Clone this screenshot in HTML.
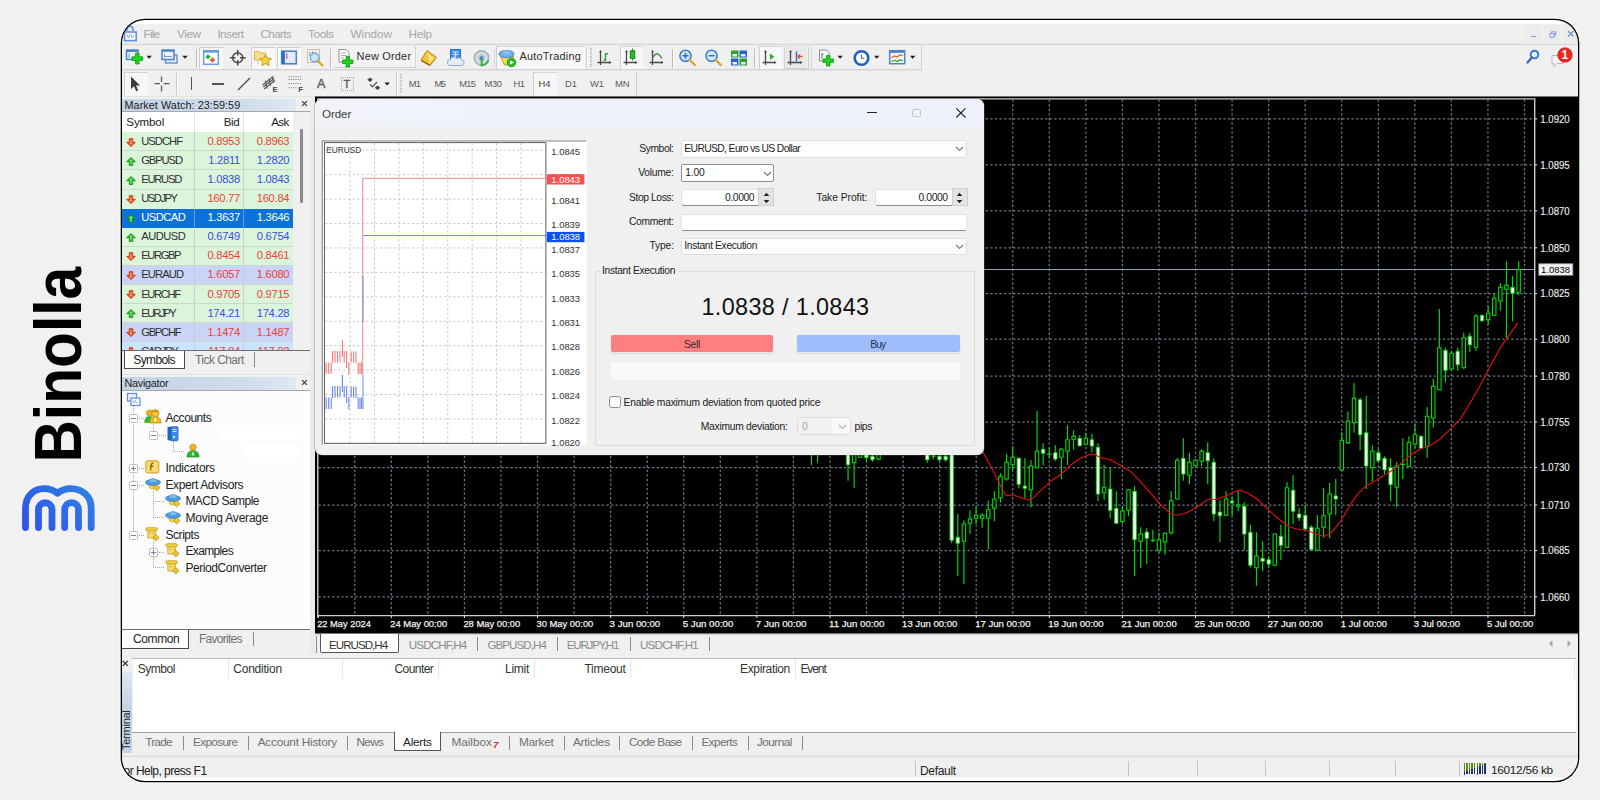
<!DOCTYPE html>
<html lang="en">
<head>
<meta charset="utf-8">
<title>Binolla - MetaTrader 4 Order</title>
<style>
*{box-sizing:border-box;margin:0;padding:0}
html,body{width:1600px;height:800px;overflow:hidden}
body{background:#f1f1f1;font-family:"Liberation Sans",sans-serif;font-size:12px;color:#222;position:relative}
.abs,.t,.b{position:absolute}
.t{white-space:nowrap;line-height:1;}
#win{position:absolute;left:122px;top:20px;width:1456px;height:760.5px;border-radius:23px;background:#f0f0f0;overflow:hidden}
#frame{position:absolute;left:122px;top:20px;width:1456px;height:760.5px;border-radius:23px;box-shadow:0 0 0 1.3px #000,0 0 0 2.4px #fbfbfb;pointer-events:none}
#in{position:absolute;left:-122px;top:-20px;width:1600px;height:800px}
.sep{position:absolute;width:1px;background:#b9b9b9}
.hl{position:absolute;height:1px}
.vl{position:absolute;width:1px}
.ptitle{position:absolute;height:14px;background:linear-gradient(90deg,#c3d3e6 0%,#cfdcec 70%,#dfe8f3 100%);}
.inp{position:absolute;background:#fff;border:1px solid #e3e3e3;border-bottom-color:#8d8d8d;border-radius:3px}
</style>
</head>
<body>
<!-- left brand -->
<div class="t" id="brand" style="left:0;top:0;transform-origin:0 0;transform:translate(23.6px,462.6px) rotate(-90deg) scale(0.872,1);font-weight:bold;font-size:67.4px;color:#000;line-height:67.4px">Binolla</div>
<svg class="abs" style="left:10px;top:470px" width="100" height="80" viewBox="0 0 100 80">
<defs><linearGradient id="lg" gradientUnits="userSpaceOnUse" x1="80" y1="14" x2="25" y2="62"><stop offset="0" stop-color="#2f82e6"/><stop offset="1" stop-color="#2f55e6"/></linearGradient></defs>
<g fill="none" stroke="url(#lg)" stroke-width="6.8" stroke-linecap="round" stroke-linejoin="round">
<path d="M15.5 57.5 V38 C15.5 26 24 18.6 34 18.6 C40 18.6 44.5 20.5 47.5 23.3 C50.5 20.5 55 18.6 61 18.6 C72 18.6 81.2 26 81.2 38 V57.5"/>
<path d="M28.5 57.5 V39.5 A6.75 6.75 0 0 1 42 39.5 V57.5"/>
<path d="M54.7 57.5 V39.5 A6.9 6.9 0 0 1 68.5 39.5 V57.5"/>
</g>
</svg>
<div id="win"><div id="in">
<!-- top white strip + menu -->
<div class="b" style="left:120px;top:19px;width:1460px;height:5px;background:#fff"></div>
<div class="b" style="left:120px;top:24px;width:1460px;height:21px;background:#f0f0f0"></div>
<div class="hl" style="left:120px;top:43px;width:1460px;background:#e8e8e8"></div><div class="hl" style="left:120px;top:44px;width:1460px;background:#d8d8d8"></div><div class="hl" style="left:120px;top:45px;width:1460px;background:#ececec"></div>
<!-- app icon -->
<svg class="abs" style="left:123px;top:25px" width="16" height="18" viewBox="0 0 16 18"><path d="M4 6 V3.5 Q4 1.5 7 1.5 Q10 1.5 10 3.5 V6" fill="#dfeaff" stroke="#5b8fe8" stroke-width="1.6"/><rect x="1.6" y="7" width="11.6" height="8.6" fill="#fff" stroke="#5b8fe8" stroke-width="1.6"/><path d="M4 9.5l1.5 3.5 1.5-3.5M8 9.5l1.5 3.5 1.2-2.5" stroke="#7aa4ec" stroke-width="1" fill="none"/></svg>
<!-- window controls -->
<div class="b" style="left:1525px;top:25px;width:17px;height:17px;background:#ececec"></div>
<div class="b" style="left:1544px;top:25px;width:17px;height:17px;background:#ececec"></div>
<div class="b" style="left:1563px;top:25px;width:17px;height:17px;background:#ececec"></div>
<div class="b" style="left:1531px;top:35.5px;width:5px;height:1.5px;background:#7f9ad6"></div>
<svg class="abs" style="left:1548.5px;top:30.5px" width="8" height="8" viewBox="0 0 9 9"><path d="M2.5 2.5V1h5v4h-1.5M1 3h5v4H1z" fill="none" stroke="#7d97cc" stroke-width="1.1"/></svg>
<svg class="abs" style="left:1567px;top:30px" width="8" height="8" viewBox="0 0 8 8"><path d="M1 1l5.5 5.5M6.5 1L1 6.5" fill="none" stroke="#7f9ad6" stroke-width="1.5"/></svg>
<!-- toolbar row 1 -->
<div class="hl" style="left:120px;top:69px;width:802px;background:#d3d3d3"></div><div class="hl" style="left:120px;top:70px;width:802px;background:#e4e4e4"></div>
<!-- ===== toolbar 1 icons ===== -->
<!-- new chart -->
<svg class="abs" style="left:125px;top:48px" width="30" height="18" viewBox="0 0 30 18">
<rect x="1.5" y="2" width="11.5" height="9.5" fill="#e8f0fb" stroke="#4d84c9" stroke-width="1.5"/><rect x="1.5" y="2" width="11.5" height="2" fill="#4d84c9"/>
<path d="M4 5.5v4.5" stroke="#7f9fd0" stroke-width="1"/>
<path d="M10.5 5.2h3.6v3.6h3.6v3.6h-3.6v3.6h-3.6v-3.6H6.9V8.800h3.6z" fill="#1fd11f" stroke="#0a9a0a" stroke-width="0.8"/>
<path d="M21.5 7.8h5.4l-2.7 3z" fill="#1a1a1a"/></svg>
<!-- profiles -->
<svg class="abs" style="left:160px;top:48px" width="32" height="18" viewBox="0 0 32 18">
<rect x="5.500" y="7" width="11.5" height="8" fill="#dfe9f8" stroke="#5b8dcc" stroke-width="1.3"/>
<rect x="2" y="2" width="12" height="9.500" fill="#eef3fb" stroke="#4d84c9" stroke-width="1.5"/><rect x="2" y="2" width="12" height="1.8" fill="#4d84c9"/>
<path d="M4.500 8.500h7.500M4.500 6v4" stroke="#7f9fd0" stroke-width="1"/>
<path d="M22.3 7.800h5.400l-2.700 3z" fill="#1a1a1a"/></svg>
<div class="sep" style="left:196px;top:49px;height:19px"></div><div class="sep" style="left:197px;top:49px;height:19px;background:#fdfdfd"></div>
<!-- market watch (pressed) -->
<div class="b" style="left:199px;top:47px;width:24px;height:22px;background:#f8f8f8;border-left:1px solid #cfcfcf;border-top:1px solid #cfcfcf"></div>
<svg class="abs" style="left:202px;top:49px" width="18" height="18" viewBox="0 0 18 18"><rect x="1.700" y="1.700" width="14.600" height="13.600" fill="#fff" stroke="#6a9de0" stroke-width="1.5"/><rect x="1.700" y="1.700" width="14.600" height="2" fill="#6a9de0"/>
<path d="M6 5.200l2.600 2.600L6 10.400 3.400 7.800z" fill="#28b428"/><path d="M10.500 8.200l2.800 2.800-2.800 2.800-2.800-2.800z" fill="#ee5a2a"/></svg>
<!-- crosshair -->
<svg class="abs" style="left:229px;top:49px" width="18" height="18" viewBox="0 0 18 18"><circle cx="8.700" cy="8.800" r="5" fill="none" stroke="#4a4a4a" stroke-width="1.500"/><path d="M8.700 1v5.500M8.700 11v5.600M1 8.800h5.500M11 8.800h5.600" stroke="#4a4a4a" stroke-width="1.500"/></svg>
<!-- navigator (pressed) -->
<div class="b" style="left:251px;top:47px;width:24px;height:22px;background:#f8f8f8;border-left:1px solid #cfcfcf;border-top:1px solid #cfcfcf"></div>
<svg class="abs" style="left:253px;top:48px" width="20" height="20" viewBox="0 0 20 20"><path d="M1.500 3.500h4.500l1.500 1.500h5v7h-11z" fill="#f7e08a" stroke="#d9b441" stroke-width="1"/><path d="M5 13v4" stroke="#999" stroke-width="1" stroke-dasharray="1 1"/>
<path d="M12.500 6.500l1.800 3.700 4 .5-3 2.800.8 4-3.600-2-3.600 2 .8-4-3-2.800 4-.5z" fill="#f7d23c" stroke="#c79a12" stroke-width="1"/></svg>
<!-- terminal (pressed) -->
<div class="b" style="left:277px;top:47px;width:24px;height:22px;background:#f8f8f8;border-left:1px solid #cfcfcf;border-top:1px solid #cfcfcf"></div>
<svg class="abs" style="left:280px;top:49px" width="18" height="18" viewBox="0 0 18 18"><rect x="1.700" y="2.200" width="14.600" height="12.600" fill="#e4ebfb" stroke="#4d84c9" stroke-width="1.600"/><rect x="1.700" y="2.200" width="3.200" height="12.600" fill="#2a6fc8"/><path d="M6.800 4v6" stroke="#e03c3c" stroke-width="1"/></svg>
<!-- strategy tester -->
<svg class="abs" style="left:306px;top:48px" width="20" height="20" viewBox="0 0 20 20"><rect x="1.500" y="1.500" width="12" height="13" fill="#f2f0ea" stroke="#c9c2b2" stroke-width="1"/><path d="M4 4v4M6.500 3.500v4M9.500 4v3" stroke="#6a8fd0" stroke-width="1"/><circle cx="8.700" cy="9.500" r="4.300" fill="#cfe2fa" fill-opacity="0.85" stroke="#7aa7e4" stroke-width="1.500"/><path d="M12 13l4.500 4.500" stroke="#d9a520" stroke-width="2.200" stroke-linecap="round"/></svg>
<div class="sep" style="left:330px;top:49px;height:19px"></div><div class="sep" style="left:331px;top:49px;height:19px;background:#fdfdfd"></div>
<!-- New Order button -->
<div class="b" style="left:334px;top:46px;width:82px;height:22px;background:#f3f3f3;border-right:1px solid #d2d2d2;border-bottom:1px solid #d2d2d2"></div>
<svg class="abs" style="left:337px;top:48px" width="18" height="20" viewBox="0 0 18 20"><path d="M2 1.500h7l3 3V14H2z" fill="#fafafa" stroke="#8f8f8f" stroke-width="1"/><path d="M4 5h5M4 7.500h6M4 10h3" stroke="#b5b5b5" stroke-width="1"/><path d="M9 8.500h3.500V12H16v3.500h-3.500V19H9v-3.500H5.500V12H9z" fill="#1fd11f" stroke="#0a9a0a" stroke-width="0.800"/></svg>
<!-- metaeditor -->
<svg class="abs" style="left:420px;top:49px" width="18" height="18" viewBox="0 0 18 18"><path d="M7 1.500l9.500 7-6.500 8-9-5.500z" fill="#f2c230" stroke="#b98512" stroke-width="1"/><path d="M7 3.500l7 5.300-4.500 5.500" fill="#fbe287" stroke="none"/><path d="M1.200 11.500l9 5" stroke="#8a5e0a" stroke-width="1.400"/></svg>
<!-- vps cloud -->
<svg class="abs" style="left:446px;top:48px" width="20" height="20" viewBox="0 0 20 20"><rect x="4.500" y="1.500" width="10" height="11" fill="#3f8fe0" stroke="#2a6fc8" stroke-width="1"/><path d="M6.500 4h6M6.500 6.500h6M9.500 4v6" stroke="#cfe4fb" stroke-width="1.200"/><path d="M4 17.500a3 3 0 0 1 .5-6 3.500 3.500 0 0 1 6.500-.8 3 3 0 0 1 5 1.300 2.800 2.800 0 0 1-.5 5.500z" fill="#e6edf8" stroke="#8fa8d4" stroke-width="1"/></svg>
<!-- signals -->
<svg class="abs" style="left:472px;top:48px" width="20" height="20" viewBox="0 0 20 20"><circle cx="9.500" cy="10" r="7.500" fill="#bfc9cf" stroke="#95a3ab" stroke-width="1"/><circle cx="9.500" cy="10" r="4.800" fill="none" stroke="#e9eef1" stroke-width="1.300"/><circle cx="9.500" cy="10" r="2" fill="#3a8ee0"/><path d="M9.700 10v7.500c3-.3 5.500-2.300 6.700-5" fill="none" stroke="#2eb02e" stroke-width="1.800"/></svg>
<div class="sep" style="left:494px;top:49px;height:19px;background:#d5d5d5"></div>
<!-- AutoTrading (pressed) -->
<div class="b" style="left:495.5px;top:46px;width:89px;height:23px;background:#f7f7f7;border-left:1px solid #cfcfcf;border-top:1px solid #d5d5d5"></div>
<svg class="abs" style="left:497px;top:47px" width="22" height="22" viewBox="0 0 22 22"><path d="M3.500 9.500h13l-2.500 8.500h-6.500z" fill="#f5d860" stroke="#c79a12" stroke-width="1"/><ellipse cx="9.500" cy="7" rx="7.500" ry="3.600" fill="#6fb1ea" stroke="#3e82cc" stroke-width="1"/><ellipse cx="9.500" cy="5.300" rx="3.600" ry="2" fill="#8cc3f2"/><circle cx="14.500" cy="15.500" r="4.300" fill="#22c022" stroke="#0f8f0f" stroke-width="0.800"/><path d="M13 13.200l4 2.300-4 2.300z" fill="#fff"/></svg>
<div class="sep" style="left:586px;top:47px;height:22px;background:#cfcfcf"></div><div class="sep" style="left:587px;top:47px;height:22px;background:#fdfdfd"></div>
<div class="b" style="left:589.5px;top:48px;width:2px;height:19px;background:repeating-linear-gradient(180deg,#bdbdbd 0 1px,transparent 1px 2px)"></div>
<!-- bar chart -->
<svg class="abs" style="left:596px;top:49px" width="18" height="18" viewBox="0 0 18 18"><path d="M4.500 2v14M1.500 13.500h13" stroke="#4a4a4a" stroke-width="1.300"/><path d="M4.500 1l-1.500 2.300h3zM15.500 13.500l-2.300-1.500v3z" fill="#4a4a4a"/><path d="M9.500 4v8M9.500 4.800h2.500M7.500 11h2" stroke="#2ca02c" stroke-width="1.400"/></svg>
<!-- candle (pressed) -->
<div class="b" style="left:620px;top:46px;width:23px;height:23px;background:#f8f8f8;border-left:1px solid #cfcfcf;border-top:1px solid #d5d5d5"></div>
<svg class="abs" style="left:622px;top:48px" width="18" height="19" viewBox="0 0 18 19"><path d="M4.500 3v14M1.500 14.500h13" stroke="#4a4a4a" stroke-width="1.300"/><path d="M4.500 2l-1.500 2.300h3zM15.500 14.500l-2.300-1.500v3z" fill="#4a4a4a"/><path d="M10.500 0.500v12" stroke="#1e8f1e" stroke-width="1"/><rect x="8.300" y="2.800" width="4.400" height="7.500" fill="#22c422" stroke="#157f15" stroke-width="1"/></svg>
<!-- line chart -->
<svg class="abs" style="left:648px;top:49px" width="18" height="18" viewBox="0 0 18 18"><path d="M4.500 2v14M1.500 13.500h13" stroke="#4a4a4a" stroke-width="1.300"/><path d="M4.500 1l-1.500 2.300h3zM15.500 13.500l-2.300-1.500v3z" fill="#4a4a4a"/><path d="M4.500 9c2-3.500 3.500-4.500 5-4.200s3 2.200 4.500 4.500" fill="none" stroke="#3a8a3a" stroke-width="1.300"/></svg>
<div class="sep" style="left:671.5px;top:49px;height:19px"></div><div class="sep" style="left:672.5px;top:49px;height:19px;background:#fdfdfd"></div>
<!-- zoom in / out -->
<svg class="abs" style="left:678px;top:48px" width="20" height="20" viewBox="0 0 20 20"><circle cx="7.500" cy="7.800" r="5.600" fill="#d8e8fb" stroke="#3a7fd4" stroke-width="1.600"/><path d="M4.500 7.800h6M7.500 4.800v6" stroke="#2a6fc8" stroke-width="1.600"/><path d="M11.800 12l5 5" stroke="#d9a520" stroke-width="2.400" stroke-linecap="round"/></svg>
<svg class="abs" style="left:704px;top:48px" width="20" height="20" viewBox="0 0 20 20"><circle cx="7.500" cy="7.800" r="5.600" fill="#d8e8fb" stroke="#3a7fd4" stroke-width="1.600"/><path d="M4.500 7.800h6" stroke="#2a6fc8" stroke-width="1.600"/><path d="M11.800 12l5 5" stroke="#d9a520" stroke-width="2.400" stroke-linecap="round"/></svg>
<!-- tile -->
<svg class="abs" style="left:730px;top:49px" width="18" height="18" viewBox="0 0 18 18"><rect x="1" y="1.500" width="7.500" height="7" fill="#2ea02e"/><rect x="9.500" y="1.500" width="7.500" height="7" fill="#2a62cc"/><rect x="1" y="9.500" width="7.500" height="7" fill="#2a62cc"/><rect x="9.500" y="9.500" width="7.500" height="7" fill="#2ea02e"/><path d="M2.500 5h4.500v2.500H2.500zM11 5h4.500v2.500H11zM2.500 13h4.500v2.500H2.500zM11 13h4.500v2.500H11z" fill="#eef4ff"/></svg>
<div class="sep" style="left:754px;top:49px;height:19px"></div><div class="sep" style="left:755px;top:49px;height:19px;background:#fdfdfd"></div>
<!-- autoscroll / shift (pressed) -->
<div class="b" style="left:759px;top:46px;width:23px;height:23px;background:#f8f8f8;border-left:1px solid #cfcfcf;border-top:1px solid #d5d5d5"></div>
<svg class="abs" style="left:761px;top:49px" width="18" height="18" viewBox="0 0 18 18"><path d="M4.500 2v14M1.500 13.500h13" stroke="#4a4a4a" stroke-width="1.300"/><path d="M4.500 1l-1.500 2.300h3zM15.500 13.500l-2.300-1.500v3z" fill="#4a4a4a"/><path d="M9 4.500l4.500 3.300L9 11z" fill="#2eb02e"/></svg>
<div class="b" style="left:784px;top:46px;width:23px;height:23px;background:#e9e9e9;border-left:1px solid #d5d5d5;border-bottom:1px solid #d0d0d0"></div>
<svg class="abs" style="left:786px;top:49px" width="20" height="18" viewBox="0 0 20 18"><path d="M4.500 2v14M1.500 13.500h14" stroke="#4a4a4a" stroke-width="1.300"/><path d="M4.500 1l-1.500 2.300h3zM16.500 13.500l-2.300-1.500v3z" fill="#4a4a4a"/><path d="M10.500 2.500v10" stroke="#2a6fc8" stroke-width="1.400"/><path d="M11.500 7.500h5M11.500 7.500l2.500-2M11.500 7.500l2.500 2" stroke="#e4552a" stroke-width="1.300" fill="none"/></svg>
<div class="sep" style="left:808px;top:47px;height:22px;background:#cfcfcf"></div><div class="sep" style="left:811px;top:47px;height:22px;background:#d5d5d5"></div>
<!-- indicators -->
<svg class="abs" style="left:817px;top:48px" width="30" height="20" viewBox="0 0 30 20"><path d="M2.500 2h7l2.500 2.500V13H2.500z" fill="#f8f8f8" stroke="#8a8a8a" stroke-width="1"/><path d="M5 5v6M5 6.500h1.500" stroke="#777" stroke-width="1"/><path d="M9.500 7.500H13V11h3.500v3.500H13V18H9.500v-3.500H6V11h3.500z" fill="#1fd11f" stroke="#0a9a0a" stroke-width="0.800"/><path d="M20.500 7.800h5.400l-2.700 3z" fill="#1a1a1a"/></svg>
<!-- clock -->
<svg class="abs" style="left:852px;top:48px" width="32" height="20" viewBox="0 0 32 20"><circle cx="9.500" cy="10" r="6.800" fill="#fff" stroke="#1f5fc4" stroke-width="2.600"/><path d="M9.500 6.500v3.800h2.800" stroke="#666" stroke-width="1.100" fill="none"/><path d="M22 7.800h5.400l-2.700 3z" fill="#1a1a1a"/></svg>
<!-- templates -->
<svg class="abs" style="left:888px;top:48px" width="32" height="20" viewBox="0 0 32 20"><rect x="1.700" y="2.700" width="15" height="13" fill="#f4f7fc" stroke="#4d84c9" stroke-width="1.500"/><rect x="1.700" y="2.700" width="15" height="2.200" fill="#4d84c9"/><path d="M3.500 9.500l3-1.500 2.500 1 3-2 3 .5" stroke="#e4552a" stroke-width="1.200" fill="none"/><path d="M3.500 13.500l3-1.200 2.500 1.200 3-1.800 3 1" stroke="#2ea02e" stroke-width="1.200" fill="none"/><path d="M22 7.800h5.400l-2.700 3z" fill="#1a1a1a"/></svg>
<div class="sep" style="left:921px;top:46px;height:23px;background:#d2d2d2"></div>
<!-- right side icons -->
<svg class="abs" style="left:1525px;top:48px" width="16" height="18" viewBox="0 0 16 18"><circle cx="9.500" cy="6.500" r="3.800" fill="#eef4ff" stroke="#3d78d6" stroke-width="2"/><path d="M6.800 9.500L2.500 14.500" stroke="#3d6ec6" stroke-width="2.400" stroke-linecap="round"/></svg>
<svg class="abs" style="left:1548px;top:46px" width="28" height="24" viewBox="0 0 28 24"><path d="M4 9.500h11v8h-6l-3.500 3v-3H4z" fill="#f4f4f4" stroke="#b9b9b9" stroke-width="1"/><circle cx="17" cy="9" r="7.300" fill="#e8261c"/><circle cx="17" cy="9" r="7.300" fill="none" stroke="#c01d15" stroke-width="0.600"/></svg>
<span class="t" style="left:1561.5px;top:49px;font-size:12px;font-weight:bold;color:#fff">1</span>
<!-- ===== toolbar 2 ===== -->
<div class="b" style="left:124px;top:72px;width:24px;height:24px;background:#f7f7f7;border-left:1px solid #d3d3d3;border-top:1px solid #d3d3d3"></div>
<svg class="abs" style="left:129px;top:75px" width="12" height="18" viewBox="0 0 12 18"><path d="M2 1.500v12.500l3-2.800 2.200 5 2-.9-2.200-4.800h4z" fill="#3c3c3c"/></svg>
<svg class="abs" style="left:153px;top:75px" width="18" height="18" viewBox="0 0 18 18"><path d="M8.500 1.500v5.500M8.500 10.500v6M1.500 8.700h5.500M10.500 8.700h6" stroke="#5a5a5a" stroke-width="1.300"/></svg>
<div class="sep" style="left:176px;top:73px;height:22px;background:#c9c9c9"></div><div class="sep" style="left:177px;top:73px;height:22px;background:#fdfdfd"></div>
<div class="b" style="left:190.8px;top:77px;width:1.4px;height:13px;background:#555"></div>
<div class="b" style="left:212px;top:83.3px;width:12px;height:1.4px;background:#555"></div>
<svg class="abs" style="left:236px;top:76px" width="16" height="16" viewBox="0 0 16 16"><path d="M2 14L14 2" stroke="#555" stroke-width="1.400"/></svg>
<svg class="abs" style="left:260px;top:74px" width="20" height="20" viewBox="0 0 20 20"><path d="M2.500 11L13.500 2.500M4 15L15 6.500M3.200 13L14.200 4.500" stroke="#555" stroke-width="1.100"/><path d="M5.300 6.500l1.900 8.200M8.800 4.500l1.900 7.500M12 2.300l1.600 6.200" stroke="#555" stroke-width="1"/></svg>
<span class="t" style="left:272.4px;top:85.6px;font-size:7.5px;font-weight:bold;color:#444">E</span>
<svg class="abs" style="left:288px;top:75px" width="16" height="16" viewBox="0 0 16 16"><path d="M0.500 1.800H14M0.500 4.500H14M0.500 8.600H14M0.500 12.700H9.500" stroke="#8e8e8e" stroke-width="1" stroke-dasharray="1.300 1"/></svg>
<span class="t" style="left:298.2px;top:85.6px;font-size:7.5px;font-weight:bold;color:#444">F</span>
<span class="t" style="left:317px;top:78px;font-size:12.6px;color:#5a5a5a;-webkit-text-stroke:0.35px #5a5a5a">A</span>
<div class="b" style="left:341px;top:76.5px;width:13px;height:14px;border:1px dotted #a8a8a8"></div>
<span class="t" style="left:343.6px;top:78.6px;font-size:11px;color:#5a5a5a;-webkit-text-stroke:0.35px #5a5a5a">T</span>
<svg class="abs" style="left:366px;top:76px" width="28" height="16" viewBox="0 0 28 16"><path d="M4 1.500l2.800 2.200L4 6 1.200 3.700zM11.500 9.500l2.800 2.200-2.800 2.300-2.800-2.300z" fill="#444"/><path d="M4 8.500l2.500 2.500 4.500-5" stroke="#555" stroke-width="1.200" fill="none"/><path d="M18.500 6.500h5.400l-2.700 3z" fill="#1a1a1a"/></svg>
<div class="sep" style="left:396px;top:72px;height:24px;background:#cfcfcf"></div><div class="sep" style="left:397px;top:72px;height:24px;background:#fdfdfd"></div>
<div class="b" style="left:399.5px;top:74px;width:2px;height:20px;background:repeating-linear-gradient(180deg,#bdbdbd 0 1px,transparent 1px 2px)"></div>
<div class="b" style="left:533px;top:72px;width:24px;height:24px;background:#f7f7f7;border-left:1px solid #cfcfcf;border-top:1px solid #d5d5d5"></div>
<div class="sep" style="left:636px;top:72px;height:24px;background:#cfcfcf"></div>
<!-- dark line under toolbars -->
<div class="hl" style="left:120px;top:96px;width:1460px;background:#e3e3e3"></div>
<span class="t" style="left:143.6px;top:29.3px;font-size:11.8px;color:#a6a6a6;letter-spacing:-0.87px;">File</span>
<span class="t" style="left:177px;top:29.3px;font-size:11.8px;color:#a6a6a6;letter-spacing:-0.45px;">View</span>
<span class="t" style="left:217.4px;top:29.3px;font-size:11.8px;color:#a6a6a6;letter-spacing:-0.58px;">Insert</span>
<span class="t" style="left:260.6px;top:29.3px;font-size:11.8px;color:#a6a6a6;letter-spacing:-0.75px;">Charts</span>
<span class="t" style="left:308px;top:29.3px;font-size:11.8px;color:#a6a6a6;letter-spacing:-0.39px;">Tools</span>
<span class="t" style="left:350.6px;top:29.3px;font-size:11.8px;color:#a6a6a6;letter-spacing:-0.11px;">Window</span>
<span class="t" style="left:408.6px;top:29.3px;font-size:11.8px;color:#a6a6a6;letter-spacing:-0.29px;">Help</span>
<span class="t" style="left:356.6px;top:50.7px;font-size:10.9px;color:#2e2e2e;letter-spacing:0.22px;">New Order</span>
<span class="t" style="left:519.4px;top:50.7px;font-size:10.9px;color:#2e2e2e;letter-spacing:0.25px;">AutoTrading</span>
<span class="t" style="left:408.7px;top:78.8px;font-size:9.4px;color:#5c5c5c;letter-spacing:-0.73px;">M1</span>
<span class="t" style="left:434.6px;top:78.8px;font-size:9.4px;color:#5c5c5c;letter-spacing:-1.63px;">M5</span>
<span class="t" style="left:459.2px;top:78.8px;font-size:9.4px;color:#5c5c5c;letter-spacing:-0.72px;">M15</span>
<span class="t" style="left:484.6px;top:78.8px;font-size:9.4px;color:#5c5c5c;letter-spacing:-0.43px;">M30</span>
<span class="t" style="left:513.6px;top:78.8px;font-size:9.4px;color:#5c5c5c;letter-spacing:-0.58px;">H1</span>
<span class="t" style="left:538.6px;top:78.8px;font-size:9.4px;color:#444;letter-spacing:-0.08px;">H4</span>
<span class="t" style="left:565px;top:78.8px;font-size:9.4px;color:#5c5c5c;letter-spacing:0.02px;">D1</span>
<span class="t" style="left:590px;top:78.8px;font-size:9.4px;color:#5c5c5c;letter-spacing:-0.06px;">W1</span>
<span class="t" style="left:615px;top:78.8px;font-size:9.4px;color:#5c5c5c;letter-spacing:-0.09px;">MN</span><!-- ===== Market Watch ===== -->
<div class="b" style="left:122px;top:97px;width:192px;height:280px;background:#f0f0f0"></div>
<div class="ptitle" style="left:122px;top:98.5px;width:173.5px;height:12px"></div>
<span class="t" style="left:124.5px;top:100.2px;font-size:10.8px;color:#1c1c1c;letter-spacing:0.07px;">Market Watch: 23:59:59</span>
<svg class="abs" style="left:300.5px;top:100.3px" width="7" height="7" viewBox="0 0 8 8"><path d="M1.2 1.2l5.6 5.6M6.800 1.200L1.200 6.800" stroke="#333" stroke-width="1.200"/></svg>
<div class="hl" style="left:122px;top:111px;width:188px;background:#a9a9a9"></div>
<div class="b" style="left:122px;top:112px;width:171px;height:20.4px;background:#fff"></div>
<div class="vl" style="left:194.4px;top:112px;height:20px;background:#e2e2e2"></div>
<div class="vl" style="left:242.8px;top:112px;height:20px;background:#e2e2e2"></div>
<span class="t" style="left:126.3px;top:116.3px;font-size:11.6px;color:#222;letter-spacing:-0.15px;">Symbol</span>
<span class="t" style="left:223.8px;top:116.3px;font-size:11.6px;color:#222;letter-spacing:-0.48px;">Bid</span>
<span class="t" style="left:271.3px;top:116.3px;font-size:11.6px;color:#222;letter-spacing:-0.71px;">Ask</span>
<div class="b" style="left:122px;top:132.4px;width:171px;height:217.6px;overflow:hidden">
<div class="b" style="left:0;top:0px;width:171px;height:19.04px;background:#dbf5db"></div>
<div class="vl" style="left:72.3px;top:0px;height:19.04px;background:#c6cfcc"></div>
<div class="vl" style="left:120.7px;top:0px;height:19.04px;background:#c6cfcc"></div>
<svg class="abs" style="left:3.5px;top:5.6px" width="10" height="9.100" viewBox="0 0 11 10"><path d="M5.500 9.400L10.300 4.800H7.400V0.700H3.600V4.800H0.700z" fill="#ee4a1e" stroke="#c23410" stroke-width="0.900"/><path d="M5.500 7.700L7.600 5.600H6.300V1.800H4.700V5.600H3.400z" fill="#ff9a6a"/></svg>
<span class="t" style="left:19.2px;top:3.8px;font-size:11.2px;color:#303030;letter-spacing:-0.95px;">USDCHF</span>
<span class="t" style="right:53px;top:3.8px;font-size:11.2px;color:#ee4136;letter-spacing:-0.27px;">0.8953</span>
<span class="t" style="right:3.7px;top:3.8px;font-size:11.2px;color:#ee4136;letter-spacing:-0.27px;">0.8963</span>
<div class="b" style="left:0;top:19.04px;width:171px;height:19.04px;background:#dbf5db"></div>
<div class="vl" style="left:72.3px;top:19.04px;height:19.04px;background:#c6cfcc"></div>
<div class="vl" style="left:120.7px;top:19.04px;height:19.04px;background:#c6cfcc"></div>
<svg class="abs" style="left:3.5px;top:24.64px" width="10" height="9.100" viewBox="0 0 11 10"><path d="M5.500 0.600L10.300 5.200H7.400V9.300H3.600V5.200H0.700z" fill="#27b427" stroke="#138a13" stroke-width="0.900"/><path d="M5.500 2.300L7.600 4.400H6.300V8.200H4.700V4.400H3.400z" fill="#7fe07f"/></svg>
<span class="t" style="left:19.2px;top:22.84px;font-size:11.2px;color:#303030;letter-spacing:-1.07px;">GBPUSD</span>
<span class="t" style="right:53px;top:22.84px;font-size:11.2px;color:#3b4ce6;letter-spacing:-0.27px;">1.2811</span>
<span class="t" style="right:3.7px;top:22.84px;font-size:11.2px;color:#3b4ce6;letter-spacing:-0.27px;">1.2820</span>
<div class="b" style="left:0;top:38.08px;width:171px;height:19.04px;background:#dbf5db"></div>
<div class="vl" style="left:72.3px;top:38.08px;height:19.04px;background:#c6cfcc"></div>
<div class="vl" style="left:120.7px;top:38.08px;height:19.04px;background:#c6cfcc"></div>
<svg class="abs" style="left:3.5px;top:43.68px" width="10" height="9.100" viewBox="0 0 11 10"><path d="M5.500 0.600L10.300 5.200H7.400V9.300H3.600V5.200H0.700z" fill="#27b427" stroke="#138a13" stroke-width="0.900"/><path d="M5.500 2.300L7.600 4.400H6.300V8.200H4.700V4.400H3.400z" fill="#7fe07f"/></svg>
<span class="t" style="left:19.2px;top:41.88px;font-size:11.2px;color:#303030;letter-spacing:-1.23px;">EURUSD</span>
<span class="t" style="right:53px;top:41.88px;font-size:11.2px;color:#3b4ce6;letter-spacing:-0.27px;">1.0838</span>
<span class="t" style="right:3.7px;top:41.88px;font-size:11.2px;color:#3b4ce6;letter-spacing:-0.27px;">1.0843</span>
<div class="b" style="left:0;top:57.12px;width:171px;height:19.04px;background:#dbf5db"></div>
<div class="vl" style="left:72.3px;top:57.12px;height:19.04px;background:#c6cfcc"></div>
<div class="vl" style="left:120.7px;top:57.12px;height:19.04px;background:#c6cfcc"></div>
<svg class="abs" style="left:3.5px;top:62.72px" width="10" height="9.100" viewBox="0 0 11 10"><path d="M5.500 9.400L10.300 4.800H7.400V0.700H3.600V4.800H0.700z" fill="#ee4a1e" stroke="#c23410" stroke-width="0.900"/><path d="M5.500 7.700L7.600 5.600H6.300V1.800H4.700V5.600H3.400z" fill="#ff9a6a"/></svg>
<span class="t" style="left:19.2px;top:60.92px;font-size:11.2px;color:#303030;letter-spacing:-1.45px;">USDJPY</span>
<span class="t" style="right:53px;top:60.92px;font-size:11.2px;color:#ee4136;letter-spacing:-0.27px;">160.77</span>
<span class="t" style="right:3.7px;top:60.92px;font-size:11.2px;color:#ee4136;letter-spacing:-0.27px;">160.84</span>
<div class="b" style="left:0;top:76.16px;width:171px;height:19.04px;background:#0a72d8"></div>
<div class="vl" style="left:72.3px;top:76.16px;height:19.04px;background:#5f9ee6"></div>
<div class="vl" style="left:120.7px;top:76.16px;height:19.04px;background:#5f9ee6"></div>
<svg class="abs" style="left:3.5px;top:81.76px" width="10" height="9.100" viewBox="0 0 11 10"><path d="M5.500 0.600L10.300 5.200H7.400V9.300H3.600V5.200H0.700z" fill="#27b427" stroke="#138a13" stroke-width="0.900"/><path d="M5.500 2.300L7.600 4.400H6.300V8.200H4.700V4.400H3.400z" fill="#7fe07f"/></svg>
<span class="t" style="left:19.2px;top:79.96px;font-size:11.2px;color:#fff;letter-spacing:-0.53px;">USDCAD</span>
<span class="t" style="right:53px;top:79.96px;font-size:11.2px;color:#ffffff;letter-spacing:-0.27px;">1.3637</span>
<span class="t" style="right:3.7px;top:79.96px;font-size:11.2px;color:#ffffff;letter-spacing:-0.27px;">1.3646</span>
<div class="b" style="left:0;top:95.2px;width:171px;height:19.04px;background:#dbf5db"></div>
<div class="vl" style="left:72.3px;top:95.2px;height:19.04px;background:#c6cfcc"></div>
<div class="vl" style="left:120.7px;top:95.2px;height:19.04px;background:#c6cfcc"></div>
<svg class="abs" style="left:3.5px;top:100.8px" width="10" height="9.100" viewBox="0 0 11 10"><path d="M5.500 0.600L10.300 5.200H7.400V9.300H3.600V5.200H0.700z" fill="#27b427" stroke="#138a13" stroke-width="0.900"/><path d="M5.500 2.300L7.600 4.400H6.300V8.200H4.700V4.400H3.400z" fill="#7fe07f"/></svg>
<span class="t" style="left:19.2px;top:99px;font-size:11.2px;color:#303030;letter-spacing:-0.51px;">AUDUSD</span>
<span class="t" style="right:53px;top:99px;font-size:11.2px;color:#3b4ce6;letter-spacing:-0.27px;">0.6749</span>
<span class="t" style="right:3.7px;top:99px;font-size:11.2px;color:#3b4ce6;letter-spacing:-0.27px;">0.6754</span>
<div class="b" style="left:0;top:114.24px;width:171px;height:19.04px;background:#dbf5db"></div>
<div class="vl" style="left:72.3px;top:114.24px;height:19.04px;background:#c6cfcc"></div>
<div class="vl" style="left:120.7px;top:114.24px;height:19.04px;background:#c6cfcc"></div>
<svg class="abs" style="left:3.5px;top:119.84px" width="10" height="9.100" viewBox="0 0 11 10"><path d="M5.500 9.400L10.300 4.800H7.400V0.700H3.600V4.800H0.700z" fill="#ee4a1e" stroke="#c23410" stroke-width="0.900"/><path d="M5.500 7.700L7.600 5.600H6.300V1.800H4.700V5.600H3.400z" fill="#ff9a6a"/></svg>
<span class="t" style="left:19.2px;top:118.04px;font-size:11.2px;color:#303030;letter-spacing:-1.37px;">EURGBP</span>
<span class="t" style="right:53px;top:118.04px;font-size:11.2px;color:#ee4136;letter-spacing:-0.27px;">0.8454</span>
<span class="t" style="right:3.7px;top:118.04px;font-size:11.2px;color:#ee4136;letter-spacing:-0.27px;">0.8461</span>
<div class="b" style="left:0;top:133.28px;width:171px;height:19.04px;background:#c9d4f6"></div>
<div class="vl" style="left:72.3px;top:133.28px;height:19.04px;background:#c6cfcc"></div>
<div class="vl" style="left:120.7px;top:133.28px;height:19.04px;background:#c6cfcc"></div>
<svg class="abs" style="left:3.5px;top:138.88px" width="10" height="9.100" viewBox="0 0 11 10"><path d="M5.500 9.400L10.300 4.800H7.400V0.700H3.600V4.800H0.700z" fill="#ee4a1e" stroke="#c23410" stroke-width="0.900"/><path d="M5.500 7.700L7.600 5.600H6.300V1.800H4.700V5.600H3.400z" fill="#ff9a6a"/></svg>
<span class="t" style="left:19.2px;top:137.08px;font-size:11.2px;color:#303030;letter-spacing:-0.87px;">EURAUD</span>
<span class="t" style="right:53px;top:137.08px;font-size:11.2px;color:#ee4136;letter-spacing:-0.27px;">1.6057</span>
<span class="t" style="right:3.7px;top:137.08px;font-size:11.2px;color:#ee4136;letter-spacing:-0.27px;">1.6080</span>
<div class="b" style="left:0;top:152.32px;width:171px;height:19.04px;background:#dbf5db"></div>
<div class="vl" style="left:72.3px;top:152.32px;height:19.04px;background:#c6cfcc"></div>
<div class="vl" style="left:120.7px;top:152.32px;height:19.04px;background:#c6cfcc"></div>
<svg class="abs" style="left:3.5px;top:157.92px" width="10" height="9.100" viewBox="0 0 11 10"><path d="M5.500 9.400L10.300 4.800H7.400V0.700H3.600V4.800H0.700z" fill="#ee4a1e" stroke="#c23410" stroke-width="0.900"/><path d="M5.500 7.700L7.600 5.600H6.300V1.800H4.700V5.600H3.400z" fill="#ff9a6a"/></svg>
<span class="t" style="left:19.2px;top:156.12px;font-size:11.2px;color:#303030;letter-spacing:-1.32px;">EURCHF</span>
<span class="t" style="right:53px;top:156.12px;font-size:11.2px;color:#ee4136;letter-spacing:-0.27px;">0.9705</span>
<span class="t" style="right:3.7px;top:156.12px;font-size:11.2px;color:#ee4136;letter-spacing:-0.27px;">0.9715</span>
<div class="b" style="left:0;top:171.36px;width:171px;height:19.04px;background:#dbf5db"></div>
<div class="vl" style="left:72.3px;top:171.36px;height:19.04px;background:#c6cfcc"></div>
<div class="vl" style="left:120.7px;top:171.36px;height:19.04px;background:#c6cfcc"></div>
<svg class="abs" style="left:3.5px;top:176.96px" width="10" height="9.100" viewBox="0 0 11 10"><path d="M5.500 0.600L10.300 5.200H7.400V9.300H3.600V5.200H0.700z" fill="#27b427" stroke="#138a13" stroke-width="0.900"/><path d="M5.500 2.300L7.600 4.400H6.300V8.200H4.700V4.400H3.400z" fill="#7fe07f"/></svg>
<span class="t" style="left:19.2px;top:175.16px;font-size:11.2px;color:#303030;letter-spacing:-1.71px;">EURJPY</span>
<span class="t" style="right:53px;top:175.16px;font-size:11.2px;color:#3b4ce6;letter-spacing:-0.27px;">174.21</span>
<span class="t" style="right:3.7px;top:175.16px;font-size:11.2px;color:#3b4ce6;letter-spacing:-0.27px;">174.28</span>
<div class="b" style="left:0;top:190.4px;width:171px;height:19.04px;background:#c9d4f6"></div>
<div class="vl" style="left:72.3px;top:190.4px;height:19.04px;background:#c6cfcc"></div>
<div class="vl" style="left:120.7px;top:190.4px;height:19.04px;background:#c6cfcc"></div>
<svg class="abs" style="left:3.5px;top:196px" width="10" height="9.100" viewBox="0 0 11 10"><path d="M5.500 9.400L10.300 4.800H7.400V0.700H3.600V4.800H0.700z" fill="#ee4a1e" stroke="#c23410" stroke-width="0.900"/><path d="M5.500 7.700L7.600 5.600H6.300V1.800H4.700V5.600H3.400z" fill="#ff9a6a"/></svg>
<span class="t" style="left:19.2px;top:194.2px;font-size:11.2px;color:#303030;letter-spacing:-1.25px;">GBPCHF</span>
<span class="t" style="right:53px;top:194.2px;font-size:11.2px;color:#ee4136;letter-spacing:-0.27px;">1.1474</span>
<span class="t" style="right:3.7px;top:194.2px;font-size:11.2px;color:#ee4136;letter-spacing:-0.27px;">1.1487</span>
<div class="b" style="left:0;top:209.44px;width:171px;height:19.04px;background:#cbe4fe"></div>
<div class="vl" style="left:72.3px;top:209.44px;height:19.04px;background:#c6cfcc"></div>
<div class="vl" style="left:120.7px;top:209.44px;height:19.04px;background:#c6cfcc"></div>
<svg class="abs" style="left:3.5px;top:215.04px" width="10" height="9.100" viewBox="0 0 11 10"><path d="M5.500 9.400L10.300 4.800H7.400V0.700H3.600V4.800H0.700z" fill="#ee4a1e" stroke="#c23410" stroke-width="0.900"/><path d="M5.500 7.700L7.600 5.600H6.300V1.800H4.700V5.600H3.400z" fill="#ff9a6a"/></svg>
<span class="t" style="left:19.2px;top:213.24px;font-size:11.2px;color:#303030;letter-spacing:-1.33px;">CADJPY</span>
<span class="t" style="right:53px;top:213.24px;font-size:11.2px;color:#ee4136;letter-spacing:-0.27px;">117.84</span>
<span class="t" style="right:3.7px;top:213.24px;font-size:11.2px;color:#ee4136;letter-spacing:-0.27px;">117.92</span>
<div class="hl" style="left:0;top:17.6px;width:171px;background:#cdd5d1"></div>
<div class="hl" style="left:0;top:36.6px;width:171px;background:#cdd5d1"></div>
<div class="hl" style="left:0;top:56.6px;width:171px;background:#cdd5d1"></div>
<div class="hl" style="left:0;top:113.6px;width:171px;background:#cdd5d1"></div>
<div class="hl" style="left:0;top:132.6px;width:171px;background:#cdd5d1"></div>
<div class="hl" style="left:0;top:151.6px;width:171px;background:#cdd5d1"></div>
<div class="hl" style="left:0;top:170.6px;width:171px;background:#cdd5d1"></div>
<div class="hl" style="left:0;top:189.6px;width:171px;background:#cdd5d1"></div>
<div class="hl" style="left:0;top:208.6px;width:171px;background:#cdd5d1"></div>
<div class="hl" style="left:0;top:227.6px;width:171px;background:#cdd5d1"></div>
</div>
<div class="b" style="left:293px;top:112px;width:17px;height:238px;background:#f0f0f0"></div>
<div class="b" style="left:299.7px;top:128.5px;width:3.4px;height:74px;background:#8a8a8a;border-radius:1px"></div>
<div class="hl" style="left:122px;top:350px;width:188px;background:#6e6e6e"></div>
<div class="b" style="left:123.5px;top:350.5px;width:61px;height:18.5px;background:#fff;border:1px solid #4a4a4a;border-top:none"></div>
<span class="t" style="left:133.3px;top:354.1px;font-size:12px;color:#222;letter-spacing:-0.62px;">Symbols</span>
<span class="t" style="left:195px;top:354.1px;font-size:12px;color:#707070;letter-spacing:-0.55px;">Tick Chart</span>
<div class="vl" style="left:253.5px;top:352px;height:15px;background:#8a8a8a"></div>
<div class="hl" style="left:122px;top:374px;width:192px;background:#e1e1e1"></div><!-- ===== Navigator ===== -->
<div class="b" style="left:122px;top:375px;width:192px;height:280px;background:#f0f0f0"></div>
<div class="ptitle" style="left:122px;top:377px;width:173.5px;height:12.5px"></div>
<span class="t" style="left:124.5px;top:378.4px;font-size:10.8px;color:#1c1c1c;letter-spacing:-0.25px;">Navigator</span>
<svg class="abs" style="left:300.5px;top:379.4px" width="7" height="7" viewBox="0 0 8 8"><path d="M1.200 1.200l5.600 5.600M6.800 1.200L1.200 6.800" stroke="#333" stroke-width="1.200"/></svg>
<div class="hl" style="left:122px;top:390px;width:188px;background:#a9a9a9"></div>
<div class="b" style="left:122px;top:391px;width:188px;height:238px;background:#fcfcfc"></div>
<div class="b" style="left:218px;top:426.4px;width:85px;height:13.4px;background:#fff"></div><div class="b" style="left:244px;top:444px;width:55px;height:13.6px;background:#fff"></div>
<div class="vl" style="left:133px;top:406px;height:128px;background:repeating-linear-gradient(180deg,#a8a8a8 0 1px,transparent 1px 2px)"></div>
<div class="vl" style="left:153px;top:424px;height:8px;background:repeating-linear-gradient(180deg,#a8a8a8 0 1px,transparent 1px 2px)"></div>
<div class="vl" style="left:173px;top:441px;height:10px;background:repeating-linear-gradient(180deg,#a8a8a8 0 1px,transparent 1px 2px)"></div>
<div class="hl" style="left:173px;top:450.5px;width:12px;background:repeating-linear-gradient(90deg,#a8a8a8 0 1px,transparent 1px 2px)"></div>
<div class="vl" style="left:153px;top:491px;height:27px;background:repeating-linear-gradient(180deg,#a8a8a8 0 1px,transparent 1px 2px)"></div>
<div class="vl" style="left:153px;top:541px;height:27px;background:repeating-linear-gradient(180deg,#a8a8a8 0 1px,transparent 1px 2px)"></div>
<div class="hl" style="left:137px;top:418px;width:8px;background:repeating-linear-gradient(90deg,#a8a8a8 0 1px,transparent 1px 2px)"></div>
<div class="hl" style="left:137px;top:468px;width:8px;background:repeating-linear-gradient(90deg,#a8a8a8 0 1px,transparent 1px 2px)"></div>
<div class="hl" style="left:137px;top:485.4px;width:8px;background:repeating-linear-gradient(90deg,#a8a8a8 0 1px,transparent 1px 2px)"></div>
<div class="hl" style="left:137px;top:535.4px;width:8px;background:repeating-linear-gradient(90deg,#a8a8a8 0 1px,transparent 1px 2px)"></div>
<div class="hl" style="left:157px;top:434.7px;width:9px;background:repeating-linear-gradient(90deg,#a8a8a8 0 1px,transparent 1px 2px)"></div>
<div class="hl" style="left:153px;top:500.5px;width:12px;background:repeating-linear-gradient(90deg,#a8a8a8 0 1px,transparent 1px 2px)"></div>
<div class="hl" style="left:153px;top:517px;width:12px;background:repeating-linear-gradient(90deg,#a8a8a8 0 1px,transparent 1px 2px)"></div>
<div class="hl" style="left:153px;top:567.4px;width:12px;background:repeating-linear-gradient(90deg,#a8a8a8 0 1px,transparent 1px 2px)"></div>
<div class="hl" style="left:157px;top:552px;width:8px;background:repeating-linear-gradient(90deg,#a8a8a8 0 1px,transparent 1px 2px)"></div>
<svg class="abs" style="left:126px;top:392px" width="16" height="16" viewBox="0 0 16 16"><rect x="1.500" y="1.500" width="9" height="7.500" fill="#eaf1fc" stroke="#5b8fe0" stroke-width="1.200"/><rect x="5" y="6" width="9" height="7.500" fill="#f4f8ff" stroke="#5b8fe0" stroke-width="1.200"/><path d="M7 8.500l1.200 2.500 1.200-2.500 1.200 2.500" stroke="#7aa4ec" stroke-width="0.800" fill="none"/></svg>
<div class="b" style="left:129px;top:413.7px;width:9px;height:9px;background:#fff;border:1px solid #bdbdbd;border-radius:1.5px"></div><div class="hl" style="left:131px;top:417.7px;width:5px;background:#6f82c4"></div>
<svg class="abs" style="left:144px;top:408px" width="18" height="16" viewBox="0 0 18 16"><path d="M0.800 14.500c0-4.200 1.800-6 4.600-6s4.600 1.800 4.600 6z" fill="#2fc02f" stroke="#1c931c" stroke-width="0.600"/><circle cx="5.500" cy="5" r="3.100" fill="#eeb022" stroke="#b98512" stroke-width="0.600"/><path d="M5.600 15c0-4.800 2.400-6.600 5.700-6.600s5.700 1.800 5.700 6.600z" fill="#e8b820" stroke="#b38a0e" stroke-width="0.700"/><path d="M11.300 9l-1.400 3.600 1.400 1.600 1.400-1.600z" fill="#fbf3d0"/><circle cx="11.300" cy="5.200" r="3.700" fill="#f2c63a" stroke="#b98512" stroke-width="0.700"/><path d="M8 4.300c.6-2.400 5.600-2.700 6.700.2-2-.9-4.500-.9-6.700-.2z" fill="#c58a10"/></svg>
<span class="t" style="left:165.5px;top:411.9px;font-size:12px;color:#222;letter-spacing:-0.45px;">Accounts</span>
<div class="b" style="left:149px;top:430.7px;width:9px;height:9px;background:#fff;border:1px solid #bdbdbd;border-radius:1.5px"></div><div class="hl" style="left:151px;top:434.7px;width:5px;background:#6f82c4"></div>
<svg class="abs" style="left:166px;top:425.5px" width="14" height="16" viewBox="0 0 14 16"><path d="M1.500 1l4-.5v14.500l-4-1z" fill="#1f66c8"/><rect x="5" y="0.800" width="7" height="14" rx="1" fill="#3a8ae6" stroke="#1f5fb8" stroke-width="0.800"/><path d="M6.500 3.500h4M6.500 5.500h4" stroke="#d5e8ff" stroke-width="1"/><rect x="7" y="10" width="2" height="2" fill="#d5e8ff"/></svg>
<svg class="abs" style="left:186px;top:442.5px" width="14" height="15" viewBox="0 0 14 15"><circle cx="7" cy="4.200" r="3.200" fill="#f0b428" stroke="#c98e12" stroke-width="0.700"/><path d="M1 14c0-4.500 2.500-6.300 6-6.300s6 1.800 6 6.300z" fill="#2eb52e" stroke="#1c8f1c" stroke-width="0.700"/><path d="M7 8l-1.200 3.500L7 13l1.200-1.500z" fill="#e8f5e8"/></svg>
<div class="b" style="left:129px;top:463.9px;width:9px;height:9px;background:#fff;border:1px solid #bdbdbd;border-radius:1.5px"></div><div class="hl" style="left:131px;top:467.9px;width:5px;background:#6f82c4"></div><div class="vl" style="left:133px;top:465.9px;height:5px;background:#6f82c4"></div>
<svg class="abs" style="left:145px;top:460px" width="15" height="14" viewBox="0 0 15 14"><rect x="0.800" y="0.800" width="13" height="12.200" rx="2" fill="#f6dc6c" stroke="#c9a01e" stroke-width="1"/><path d="M8.500 3.200c-1.500-.3-2 .5-2.200 2L5.500 10.500M4.800 6.300h3.600" stroke="#8a5a0a" stroke-width="1.200" fill="none"/></svg>
<span class="t" style="left:165.5px;top:462px;font-size:12px;color:#222;letter-spacing:-0.28px;">Indicators</span>
<div class="b" style="left:129px;top:481.1px;width:9px;height:9px;background:#fff;border:1px solid #bdbdbd;border-radius:1.5px"></div><div class="hl" style="left:131px;top:485.1px;width:5px;background:#6f82c4"></div>
<svg class="abs" style="left:145px;top:476.5px" width="16" height="15" viewBox="0 0 16 15"><circle cx="7.300" cy="8.800" r="3.300" fill="#f6d84a" stroke="#caa21e" stroke-width="0.600"/><ellipse cx="8" cy="5.400" rx="7.500" ry="2.900" fill="#4f9fe0" stroke="#2f78c4" stroke-width="0.800"/><path d="M3.900 4.900C3.900 0.400 12.100 0.400 12.100 4.900C10 6 6 6 3.900 4.900z" fill="#79bdf0" stroke="#3a86d0" stroke-width="0.600"/><path d="M11.600 7.600l3.300 3.100-3.300 3.100-3.300-3.100z" fill="#f2c630" stroke="#b0860e" stroke-width="0.800"/></svg>
<span class="t" style="left:165.5px;top:478.8px;font-size:12px;color:#222;letter-spacing:-0.38px;">Expert Advisors</span>
<svg class="abs" style="left:165px;top:493px" width="16" height="15" viewBox="0 0 16 15"><circle cx="7.300" cy="8.800" r="3.300" fill="#f6d84a" stroke="#caa21e" stroke-width="0.600"/><ellipse cx="8" cy="5.400" rx="7.500" ry="2.900" fill="#4f9fe0" stroke="#2f78c4" stroke-width="0.800"/><path d="M3.900 4.900C3.900 0.400 12.100 0.400 12.100 4.900C10 6 6 6 3.900 4.900z" fill="#79bdf0" stroke="#3a86d0" stroke-width="0.600"/><path d="M11.600 7.600l3.300 3.100-3.300 3.100-3.300-3.100z" fill="#f2c630" stroke="#b0860e" stroke-width="0.800"/></svg>
<span class="t" style="left:185.4px;top:495.4px;font-size:12px;color:#222;letter-spacing:-0.53px;">MACD Sample</span>
<svg class="abs" style="left:165px;top:509.7px" width="16" height="15" viewBox="0 0 16 15"><circle cx="7.300" cy="8.800" r="3.300" fill="#f6d84a" stroke="#caa21e" stroke-width="0.600"/><ellipse cx="8" cy="5.400" rx="7.500" ry="2.900" fill="#4f9fe0" stroke="#2f78c4" stroke-width="0.800"/><path d="M3.900 4.900C3.900 0.400 12.100 0.400 12.100 4.900C10 6 6 6 3.900 4.900z" fill="#79bdf0" stroke="#3a86d0" stroke-width="0.600"/><path d="M11.600 7.600l3.300 3.100-3.300 3.100-3.300-3.100z" fill="#f2c630" stroke="#b0860e" stroke-width="0.800"/></svg>
<span class="t" style="left:185.4px;top:512px;font-size:12px;color:#222;letter-spacing:-0.21px;">Moving Average</span>
<div class="b" style="left:129px;top:531.1px;width:9px;height:9px;background:#fff;border:1px solid #bdbdbd;border-radius:1.5px"></div><div class="hl" style="left:131px;top:535.1px;width:5px;background:#6f82c4"></div>
<svg class="abs" style="left:145px;top:526.5px" width="15" height="15" viewBox="0 0 15 15"><path d="M2.800 3h7.600v8h-7.600z" fill="#f7de74" stroke="#c9a01e" stroke-width="0.800"/><rect x="0.800" y="0.700" width="11.600" height="3.200" rx="1.600" fill="#f2cf4a" stroke="#c49a18" stroke-width="0.800"/><path d="M5.200 5.800v1.400M8 5.800v1.400" stroke="#b8922a" stroke-width="1"/><path d="M10.900 7.700l3.200 3-3.200 3-3.200-3z" fill="#f2c630" stroke="#b0860e" stroke-width="0.800"/></svg>
<span class="t" style="left:165.5px;top:528.8px;font-size:12px;color:#222;letter-spacing:-0.45px;">Scripts</span>
<div class="b" style="left:149px;top:547.7px;width:9px;height:9px;background:#fff;border:1px solid #bdbdbd;border-radius:1.5px"></div><div class="hl" style="left:151px;top:551.7px;width:5px;background:#6f82c4"></div><div class="vl" style="left:153px;top:549.7px;height:5px;background:#6f82c4"></div>
<svg class="abs" style="left:165px;top:543px" width="15" height="15" viewBox="0 0 15 15"><path d="M2.800 3h7.600v8h-7.600z" fill="#f7de74" stroke="#c9a01e" stroke-width="0.800"/><rect x="0.800" y="0.700" width="11.600" height="3.200" rx="1.600" fill="#f2cf4a" stroke="#c49a18" stroke-width="0.800"/><path d="M5.200 5.800v1.400M8 5.800v1.400" stroke="#b8922a" stroke-width="1"/><path d="M10.900 7.700l3.200 3-3.200 3-3.200-3z" fill="#f2c630" stroke="#b0860e" stroke-width="0.800"/></svg>
<span class="t" style="left:185.4px;top:545.4px;font-size:12px;color:#222;letter-spacing:-0.63px;">Examples</span>
<svg class="abs" style="left:165px;top:559.7px" width="15" height="15" viewBox="0 0 15 15"><path d="M2.800 3h7.600v8h-7.600z" fill="#f7de74" stroke="#c9a01e" stroke-width="0.800"/><rect x="0.800" y="0.700" width="11.600" height="3.200" rx="1.600" fill="#f2cf4a" stroke="#c49a18" stroke-width="0.800"/><path d="M5.200 5.800v1.400M8 5.800v1.400" stroke="#b8922a" stroke-width="1"/><path d="M10.900 7.700l3.200 3-3.200 3-3.200-3z" fill="#f2c630" stroke="#b0860e" stroke-width="0.800"/></svg>
<span class="t" style="left:185.4px;top:562px;font-size:12px;color:#222;letter-spacing:-0.41px;">PeriodConverter</span>
<div class="hl" style="left:122px;top:629px;width:188px;background:#6e6e6e"></div>
<div class="b" style="left:122px;top:629.5px;width:66.5px;height:19px;background:#fff;border:1px solid #4a4a4a;border-top:none;border-left:none"></div>
<span class="t" style="left:133px;top:632.6px;font-size:12px;color:#222;letter-spacing:-0.4px;">Common</span>
<span class="t" style="left:199px;top:632.6px;font-size:12px;color:#707070;letter-spacing:-0.73px;">Favorites</span>
<div class="vl" style="left:253px;top:632px;height:14px;background:#8a8a8a"></div>
<div class="hl" style="left:122px;top:653.5px;width:1460px;background:#dcdcdc"></div><!-- ===== Chart ===== -->
<div class="b" style="left:310px;top:97px;width:5.5px;height:558px;background:#ebebeb"></div>
<svg class="abs" style="left:315px;top:96px" width="1265" height="538" viewBox="315 96 1265 538" font-family="Liberation Sans, sans-serif">
<rect x="315" y="96.500" width="1265" height="537" fill="#000"/>
<path d="M354.75 99.500V615M391.31 99.500V615M427.87 99.500V615M464.42 99.500V615M500.98 99.500V615M537.53 99.500V615M574.09 99.500V615M610.64 99.500V615M647.19 99.500V615M683.75 99.500V615M720.31 99.500V615M756.86 99.500V615M793.41 99.500V615M829.97 99.500V615M866.53 99.500V615M903.08 99.500V615M939.63 99.500V615M976.19 99.500V615M1012.74 99.500V615M1049.3 99.500V615M1085.86 99.500V615M1122.41 99.500V615M1158.96 99.500V615M1195.52 99.500V615M1232.08 99.500V615M1268.63 99.500V615M1305.18 99.500V615M1341.74 99.500V615M1378.3 99.500V615M1414.85 99.500V615M1451.4 99.500V615M1487.96 99.500V615M1524.52 99.500V615M318.500 118.9H1534M318.500 164.9H1534M318.500 210.8H1534M318.500 247.8H1534M318.500 293.6H1534M318.500 339.2H1534M318.500 376.2H1534M318.500 422H1534M318.500 467.6H1534M318.500 505H1534M318.500 550.6H1534M318.500 596.8H1534" stroke="#76889a" stroke-width="1.250" stroke-dasharray="2.350 2.220" fill="none" opacity="0.880"/>
<path d="M317.800 99V617.500M317.300 615.600H1535M1534.700 98.800V615.600M317.300 98.900H1535.400" stroke="#cdcdcd" stroke-width="1.400" fill="none"/>
<path d="M1535 118.9h2.200" stroke="#e8e8e8" stroke-width="1"/>
<text x="1540.300" y="122.6" font-size="10" fill="#f0f0f0" stroke="#f0f0f0" stroke-width="0.120" textLength="29.400" lengthAdjust="spacingAndGlyphs">1.0920</text>
<path d="M1535 164.9h2.200" stroke="#e8e8e8" stroke-width="1"/>
<text x="1540.300" y="168.6" font-size="10" fill="#f0f0f0" stroke="#f0f0f0" stroke-width="0.120" textLength="29.400" lengthAdjust="spacingAndGlyphs">1.0895</text>
<path d="M1535 210.8h2.200" stroke="#e8e8e8" stroke-width="1"/>
<text x="1540.300" y="214.5" font-size="10" fill="#f0f0f0" stroke="#f0f0f0" stroke-width="0.120" textLength="29.400" lengthAdjust="spacingAndGlyphs">1.0870</text>
<path d="M1535 247.8h2.200" stroke="#e8e8e8" stroke-width="1"/>
<text x="1540.300" y="251.5" font-size="10" fill="#f0f0f0" stroke="#f0f0f0" stroke-width="0.120" textLength="29.400" lengthAdjust="spacingAndGlyphs">1.0850</text>
<path d="M1535 293.6h2.200" stroke="#e8e8e8" stroke-width="1"/>
<text x="1540.300" y="297.3" font-size="10" fill="#f0f0f0" stroke="#f0f0f0" stroke-width="0.120" textLength="29.400" lengthAdjust="spacingAndGlyphs">1.0825</text>
<path d="M1535 339.2h2.200" stroke="#e8e8e8" stroke-width="1"/>
<text x="1540.300" y="342.9" font-size="10" fill="#f0f0f0" stroke="#f0f0f0" stroke-width="0.120" textLength="29.400" lengthAdjust="spacingAndGlyphs">1.0800</text>
<path d="M1535 376.2h2.200" stroke="#e8e8e8" stroke-width="1"/>
<text x="1540.300" y="379.9" font-size="10" fill="#f0f0f0" stroke="#f0f0f0" stroke-width="0.120" textLength="29.400" lengthAdjust="spacingAndGlyphs">1.0780</text>
<path d="M1535 422h2.200" stroke="#e8e8e8" stroke-width="1"/>
<text x="1540.300" y="425.7" font-size="10" fill="#f0f0f0" stroke="#f0f0f0" stroke-width="0.120" textLength="29.400" lengthAdjust="spacingAndGlyphs">1.0755</text>
<path d="M1535 467.6h2.200" stroke="#e8e8e8" stroke-width="1"/>
<text x="1540.300" y="471.3" font-size="10" fill="#f0f0f0" stroke="#f0f0f0" stroke-width="0.120" textLength="29.400" lengthAdjust="spacingAndGlyphs">1.0730</text>
<path d="M1535 505h2.200" stroke="#e8e8e8" stroke-width="1"/>
<text x="1540.300" y="508.7" font-size="10" fill="#f0f0f0" stroke="#f0f0f0" stroke-width="0.120" textLength="29.400" lengthAdjust="spacingAndGlyphs">1.0710</text>
<path d="M1535 550.6h2.200" stroke="#e8e8e8" stroke-width="1"/>
<text x="1540.300" y="554.3" font-size="10" fill="#f0f0f0" stroke="#f0f0f0" stroke-width="0.120" textLength="29.400" lengthAdjust="spacingAndGlyphs">1.0685</text>
<path d="M1535 596.8h2.200" stroke="#e8e8e8" stroke-width="1"/>
<text x="1540.300" y="600.5" font-size="10" fill="#f0f0f0" stroke="#f0f0f0" stroke-width="0.120" textLength="29.400" lengthAdjust="spacingAndGlyphs">1.0660</text>
<path d="M318.2 615.600v2.500" stroke="#e8e8e8" stroke-width="1"/>
<text x="317.2" y="627.300" font-size="9.600" fill="#f2f2f2" stroke="#f2f2f2" stroke-width="0.250" textLength="53.7" lengthAdjust="spacingAndGlyphs">22 May 2024</text>
<path d="M391.31 615.600v2.500" stroke="#e8e8e8" stroke-width="1"/>
<text x="390.31" y="627.300" font-size="9.600" fill="#f2f2f2" stroke="#f2f2f2" stroke-width="0.250" textLength="56.8" lengthAdjust="spacingAndGlyphs">24 May 00:00</text>
<path d="M464.42 615.600v2.500" stroke="#e8e8e8" stroke-width="1"/>
<text x="463.42" y="627.300" font-size="9.600" fill="#f2f2f2" stroke="#f2f2f2" stroke-width="0.250" textLength="56.8" lengthAdjust="spacingAndGlyphs">28 May 00:00</text>
<path d="M537.53 615.600v2.500" stroke="#e8e8e8" stroke-width="1"/>
<text x="536.53" y="627.300" font-size="9.600" fill="#f2f2f2" stroke="#f2f2f2" stroke-width="0.250" textLength="56.8" lengthAdjust="spacingAndGlyphs">30 May 00:00</text>
<path d="M610.64 615.600v2.500" stroke="#e8e8e8" stroke-width="1"/>
<text x="609.64" y="627.300" font-size="9.600" fill="#f2f2f2" stroke="#f2f2f2" stroke-width="0.250" textLength="50.6" lengthAdjust="spacingAndGlyphs">3 Jun 00:00</text>
<path d="M683.75 615.600v2.500" stroke="#e8e8e8" stroke-width="1"/>
<text x="682.75" y="627.300" font-size="9.600" fill="#f2f2f2" stroke="#f2f2f2" stroke-width="0.250" textLength="50.6" lengthAdjust="spacingAndGlyphs">5 Jun 00:00</text>
<path d="M756.86 615.600v2.500" stroke="#e8e8e8" stroke-width="1"/>
<text x="755.86" y="627.300" font-size="9.600" fill="#f2f2f2" stroke="#f2f2f2" stroke-width="0.250" textLength="50.6" lengthAdjust="spacingAndGlyphs">7 Jun 00:00</text>
<path d="M829.97 615.600v2.500" stroke="#e8e8e8" stroke-width="1"/>
<text x="828.97" y="627.300" font-size="9.600" fill="#f2f2f2" stroke="#f2f2f2" stroke-width="0.250" textLength="55.3" lengthAdjust="spacingAndGlyphs">11 Jun 00:00</text>
<path d="M903.08 615.600v2.500" stroke="#e8e8e8" stroke-width="1"/>
<text x="902.08" y="627.300" font-size="9.600" fill="#f2f2f2" stroke="#f2f2f2" stroke-width="0.250" textLength="55.3" lengthAdjust="spacingAndGlyphs">13 Jun 00:00</text>
<path d="M976.19 615.600v2.500" stroke="#e8e8e8" stroke-width="1"/>
<text x="975.19" y="627.300" font-size="9.600" fill="#f2f2f2" stroke="#f2f2f2" stroke-width="0.250" textLength="55.3" lengthAdjust="spacingAndGlyphs">17 Jun 00:00</text>
<path d="M1049.3 615.600v2.500" stroke="#e8e8e8" stroke-width="1"/>
<text x="1048.3" y="627.300" font-size="9.600" fill="#f2f2f2" stroke="#f2f2f2" stroke-width="0.250" textLength="55.3" lengthAdjust="spacingAndGlyphs">19 Jun 00:00</text>
<path d="M1122.41 615.600v2.500" stroke="#e8e8e8" stroke-width="1"/>
<text x="1121.41" y="627.300" font-size="9.600" fill="#f2f2f2" stroke="#f2f2f2" stroke-width="0.250" textLength="55.3" lengthAdjust="spacingAndGlyphs">21 Jun 00:00</text>
<path d="M1195.52 615.600v2.500" stroke="#e8e8e8" stroke-width="1"/>
<text x="1194.52" y="627.300" font-size="9.600" fill="#f2f2f2" stroke="#f2f2f2" stroke-width="0.250" textLength="55.3" lengthAdjust="spacingAndGlyphs">25 Jun 00:00</text>
<path d="M1268.63 615.600v2.500" stroke="#e8e8e8" stroke-width="1"/>
<text x="1267.63" y="627.300" font-size="9.600" fill="#f2f2f2" stroke="#f2f2f2" stroke-width="0.250" textLength="55.3" lengthAdjust="spacingAndGlyphs">27 Jun 00:00</text>
<path d="M1341.74 615.600v2.500" stroke="#e8e8e8" stroke-width="1"/>
<text x="1340.74" y="627.300" font-size="9.600" fill="#f2f2f2" stroke="#f2f2f2" stroke-width="0.250" textLength="46.2" lengthAdjust="spacingAndGlyphs">1 Jul 00:00</text>
<path d="M1414.85 615.600v2.500" stroke="#e8e8e8" stroke-width="1"/>
<text x="1413.85" y="627.300" font-size="9.600" fill="#f2f2f2" stroke="#f2f2f2" stroke-width="0.250" textLength="46.2" lengthAdjust="spacingAndGlyphs">3 Jul 00:00</text>
<path d="M1487.96 615.600v2.500" stroke="#e8e8e8" stroke-width="1"/>
<text x="1486.96" y="627.300" font-size="9.600" fill="#f2f2f2" stroke="#f2f2f2" stroke-width="0.250" textLength="46.2" lengthAdjust="spacingAndGlyphs">5 Jul 00:00</text>
<path d="M318.500 269.500H1534" stroke="#8fa0b2" stroke-width="1"/>
<path d="M811.49 440.3V465.3M817.59 440.3V462.8M848.07 440.3V480.8M854.16 440.3V488.3M860.26 440.3V457.8M866.36 440.3V461.3M872.45 440.3V461.8M878.55 440.3V459.8M927.32 440.3V462.8M933.41 440.3V459.3M931.21 456.05h4.400M939.51 440.3V461.8M945.6 440.3V461.8M951.7 430.3V543.3M957.8 514.05V576.3M963.89 520.3V584.05M969.99 510.3V534.05M976.08 506.3V524.05M982.18 513.3V527.8M988.28 500.8V549.3M994.37 491.3V521.3M1000.47 473.3V502.8M1006.56 454.05V480.8M1012.66 446.3V470.3M1018.76 457.3V488.3M1024.85 458.3V497.8M1030.95 460.3V507.3M1037.04 410.8V467.8M1043.14 443.3V465.3M1049.24 447.8V458.3M1047.04 454.4h4.400M1055.33 445.3V461.3M1061.43 447.8V479.3M1067.52 425.3V465.3M1073.62 430.3V449.8M1079.72 435.3V446.3M1085.81 432.8V445.3M1091.91 433.8V452.3M1098 443.3V501.3M1104.1 464.8V499.8M1110.2 467.3V518.3M1116.29 491.3V524.05M1122.39 506.3V524.05M1128.48 489.05V516.3M1134.58 486.3V576.3M1140.68 527.3V567.8M1146.77 528.3V564.05M1152.87 529.8V542.3M1150.67 540.3h4.400M1158.96 532.8V552.8M1165.06 532.3V554.8M1171.16 491.3V534.8M1177.25 457.8V499.8M1183.35 438.3V480.8M1189.44 452.8V484.3M1195.54 459.05V467.8M1201.64 449.05V466.3M1207.73 442.3V484.3M1213.83 458.3V521.3M1219.92 500.3V542.05M1226.02 491.3V516.3M1232.12 496.3V515.3M1238.21 490.3V511.3M1244.31 502.3V550.3M1250.4 524.8V567.8M1256.5 532.3V585.8M1262.6 541.3V571.3M1268.69 556.3V567.8M1274.79 533.3V566.3M1280.88 524.8V560.3M1286.98 482.3V547.8M1293.08 475.3V524.05M1299.17 507.8V521.05M1305.27 504.8V531.3M1311.36 525.3V550.8M1317.46 515.3V551.3M1323.56 487.8V537.8M1329.65 482.8V538.3M1335.75 479.05V515.05M1341.84 432.3V471.05M1347.94 411.3V444.05M1354.04 382.8V432.8M1360.13 397.8V450.3M1366.23 395.8V489.05M1372.32 445.3V481.3M1378.42 449.05V462.8M1384.52 456.3V474.05M1390.61 458.3V501.3M1396.71 462.3V507.3M1402.8 438.3V479.05M1400.6 464.4h4.400M1408.9 436.3V467.05M1415 423.3V448.3M1421.09 435.3V449.05M1427.19 407.3V457.8M1433.28 378.8V427.8M1439.38 309.05V390.3M1445.48 347.8V382.3M1451.57 351.3V370.3M1457.67 347.8V370.8M1463.76 332.8V369.05M1469.86 332.8V352.3M1475.96 314.05V350.8M1482.05 314.8V321.55M1488.15 305.8V324.8M1494.24 293.3V316.05M1500.34 283.3V310.8M1506.44 261.3V338.3M1512.53 276.05V321.3M1518.63 261.3V295.3" stroke="#00dc00" stroke-width="1.150" fill="none"/>
<path d="M852.46 440.3h3.400V462.8h-3.400zM858.56 450.3h3.400V457.3h-3.400zM876.85 450.3h3.400V459.1h-3.400zM962.19 524.05h3.400V541.3h-3.400zM968.29 519.05h3.400V523.3h-3.400zM974.38 515.3h3.400V518.3h-3.400zM980.48 515.3h3.400V518.3h-3.400zM986.58 509.8h3.400V518.3h-3.400zM992.67 499.05h3.400V508.3h-3.400zM998.77 476.3h3.400V497.8h-3.400zM1004.86 462.3h3.400V479.05h-3.400zM1010.96 457.3h3.400V464.8h-3.400zM1029.25 466.05h3.400V489.8h-3.400zM1035.34 451.3h3.400V467.8h-3.400zM1059.73 449.3h3.400V457.3h-3.400zM1065.82 439.8h3.400V451.3h-3.400zM1071.92 436.3h3.400V439.3h-3.400zM1084.11 438.3h3.400V444.3h-3.400zM1102.4 487.3h3.400V492.8h-3.400zM1120.69 511.05h3.400V521.55h-3.400zM1126.78 489.8h3.400V510.3h-3.400zM1138.98 534.05h3.400V541.3h-3.400zM1157.26 539.8h3.400V550.3h-3.400zM1163.36 533.3h3.400V542.05h-3.400zM1169.46 500.8h3.400V532.8h-3.400zM1175.55 460.3h3.400V499.05h-3.400zM1187.74 462.3h3.400V475.3h-3.400zM1193.84 460.3h3.400V465.8h-3.400zM1199.94 451.3h3.400V461.3h-3.400zM1224.32 499.05h3.400V515.3h-3.400zM1236.51 504.8h3.400V506.3h-3.400zM1254.8 556.05h3.400V567.8h-3.400zM1273.09 534.05h3.400V565.3h-3.400zM1285.28 487.8h3.400V547.3h-3.400zM1315.76 528.3h3.400V550.3h-3.400zM1321.86 515.8h3.400V527.3h-3.400zM1327.95 494.05h3.400V514.05h-3.400zM1340.14 440.3h3.400V470.05h-3.400zM1346.24 421.3h3.400V442.8h-3.400zM1352.34 398.3h3.400V422.8h-3.400zM1370.62 451.3h3.400V467.8h-3.400zM1395.01 466.05h3.400V487.3h-3.400zM1407.2 442.3h3.400V466.3h-3.400zM1413.3 434.8h3.400V444.05h-3.400zM1425.49 416.3h3.400V446.3h-3.400zM1431.58 386.3h3.400V418.05h-3.400zM1437.68 347.8h3.400V389.8h-3.400zM1449.87 353.3h3.400V369.05h-3.400zM1462.06 337.8h3.400V367.8h-3.400zM1474.26 316.05h3.400V347.3h-3.400zM1486.45 313.3h3.400V319.8h-3.400zM1492.54 298.3h3.400V315.3h-3.400zM1498.64 287.3h3.400V301.05h-3.400zM1504.74 285.3h3.400V289.3h-3.400zM1516.93 269.8h3.400V292.3h-3.400z" stroke="#00dc00" stroke-width="1.100" fill="#000"/>
<path d="M846.37 440.3h3.400V464.8h-3.400zM864.66 452.3h3.400V457.8h-3.400zM870.75 456.3h3.400V459.8h-3.400zM925.62 450.3h3.400V459.8h-3.400zM937.81 456.3h3.400V459.8h-3.400zM943.9 456.3h3.400V459.8h-3.400zM950 432.3h3.400V540.3h-3.400zM956.1 537.3h3.400V543.3h-3.400zM1017.06 458.3h3.400V484.3h-3.400zM1023.15 486.05h3.400V488.3h-3.400zM1041.44 449.3h3.400V453.3h-3.400zM1053.63 452.8h3.400V459.05h-3.400zM1078.02 438.3h3.400V445.8h-3.400zM1090.21 439.8h3.400V446.05h-3.400zM1096.3 447.3h3.400V494.05h-3.400zM1108.5 489.05h3.400V510.3h-3.400zM1114.59 508.3h3.400V523.3h-3.400zM1132.88 491.3h3.400V539.8h-3.400zM1145.07 532.05h3.400V538.3h-3.400zM1181.65 458.3h3.400V474.05h-3.400zM1206.03 452.8h3.400V460.8h-3.400zM1212.13 462.3h3.400V514.05h-3.400zM1218.22 512.05h3.400V515.8h-3.400zM1230.42 501.05h3.400V502.8h-3.400zM1242.61 506.3h3.400V534.05h-3.400zM1248.7 532.3h3.400V565.3h-3.400zM1260.9 558.3h3.400V561.3h-3.400zM1266.99 559.8h3.400V564.05h-3.400zM1279.18 536.3h3.400V545.3h-3.400zM1291.38 490.3h3.400V511.3h-3.400zM1297.47 514.05h3.400V517.8h-3.400zM1303.57 515.3h3.400V529.05h-3.400zM1309.66 527.3h3.400V549.8h-3.400zM1334.05 495.9h3.400V499.05h-3.400zM1358.43 399.8h3.400V434.8h-3.400zM1364.53 432.8h3.400V466.05h-3.400zM1376.72 452.8h3.400V460.8h-3.400zM1382.82 458.3h3.400V469.8h-3.400zM1388.91 467.8h3.400V484.8h-3.400zM1419.39 436.3h3.400V448.3h-3.400zM1443.78 350.3h3.400V370.3h-3.400zM1455.97 351.3h3.400V364.8h-3.400zM1468.16 336.3h3.400V344.8h-3.400zM1480.35 315.3h3.400V320.8h-3.400zM1510.83 287.3h3.400V293.3h-3.400z" stroke="#00dc00" stroke-width="0.900" fill="#fff"/>
<path d="M960.3 420.3 L975.3 440.3 L984.05 454.05 L994.05 472.8 L1002.8 490.3 L1006.3 495.8 L1012.8 494.8 L1022.8 498.3 L1030.3 500.3 L1040.3 490.8 L1050.3 481.55 L1060.3 474.8 L1070.3 465.3 L1080.3 458.3 L1090.3 454.3 L1095.3 454.6 L1100.3 457.8 L1110.3 459.8 L1120.3 465.3 L1130.3 471.3 L1140.3 481.3 L1150.3 492.8 L1160.3 504.3 L1170.3 513.3 L1176.3 515.3 L1185.3 513.3 L1195.3 508.3 L1205.3 501.3 L1210.3 498.8 L1215.3 499.8 L1225.3 496.3 L1235.3 491.3 L1240.3 490.3 L1248.8 493.55 L1258.8 500.3 L1268.8 510.3 L1278.8 519.05 L1288.8 526.55 L1296.3 529.05 L1306.3 530.3 L1316.3 534.05 L1323.8 536.55 L1331.3 532.8 L1341.3 520.3 L1351.3 502.8 L1358.8 492.8 L1366.3 485.8 L1376.3 480.3 L1386.3 474.05 L1396.3 467.8 L1400.3 464.05 L1410.3 455.3 L1420.3 449.05 L1430.3 445.3 L1440.3 439.05 L1450.3 429.05 L1460.3 419.05 L1470.3 402.8 L1480.3 385.3 L1490.3 366.3 L1500.3 347.8 L1506.3 339.05 L1517.8 322.8" stroke="#e01010" stroke-width="1.150" fill="none" stroke-linejoin="round"/>
<rect x="1538.800" y="263.800" width="34" height="11.400" fill="#f4f4f4" stroke="#8fa0b2" stroke-width="0.800"/>
<text x="1541" y="273.100" font-size="9.500" fill="#000" textLength="29" lengthAdjust="spacingAndGlyphs">1.0838</text>
</svg><!-- ===== chart tabs ===== -->
<div class="b" style="left:315px;top:633.5px;width:1265px;height:20.5px;background:#f0f0f0"></div>
<div class="hl" style="left:315px;top:634px;width:1265px;background:#cfcfcf"></div>
<div class="vl" style="left:316px;top:636px;height:17px;background:#8a8a8a"></div>
<div class="b" style="left:319.5px;top:634px;width:79px;height:19px;background:#fff;border:1px solid #555;border-top:none;border-radius:0 0 2px 2px"></div>
<span class="t" style="left:329px;top:638.7px;font-size:11.6px;color:#333;letter-spacing:-0.98px;">EURUSD,H4</span>
<span class="t" style="left:408.7px;top:638.7px;font-size:11.6px;color:#8b8b8b;letter-spacing:-0.81px;">USDCHF,H4</span>
<span class="t" style="left:487.4px;top:638.7px;font-size:11.6px;color:#8b8b8b;letter-spacing:-0.93px;">GBPUSD,H4</span>
<span class="t" style="left:566.8px;top:638.7px;font-size:11.6px;color:#8b8b8b;letter-spacing:-1.22px;">EURJPY,H1</span>
<span class="t" style="left:640px;top:638.7px;font-size:11.6px;color:#8b8b8b;letter-spacing:-0.78px;">USDCHF,H1</span>
<div class="vl" style="left:477.3px;top:637px;height:14px;background:#8a8a8a"></div>
<div class="vl" style="left:556.7px;top:637px;height:14px;background:#8a8a8a"></div>
<div class="vl" style="left:629.8px;top:637px;height:14px;background:#8a8a8a"></div>
<div class="vl" style="left:709.3px;top:637px;height:14px;background:#8a8a8a"></div>
<svg class="abs" style="left:1546px;top:639px" width="28" height="9" viewBox="0 0 28 9"><path d="M6.500 1v7L3 4.500zM21.500 1v7L25 4.500z" fill="#a5a5a5"/></svg>
<!-- ===== terminal ===== -->
<div class="b" style="left:122px;top:654px;width:1460px;height:103px;background:#f0f0f0"></div>
<div class="hl" style="left:132px;top:657.5px;width:1444px;background:#b9b9b9"></div>
<div class="b" style="left:133px;top:658.5px;width:1442.5px;height:73.5px;background:#fff"></div>
<div class="hl" style="left:132px;top:732px;width:1444px;background:#9d9d9d"></div>
<svg class="abs" style="left:122px;top:659.5px" width="7" height="7" viewBox="0 0 7 7"><path d="M0.800 0.800l5 5M5.800 0.800l-5 5" stroke="#222" stroke-width="1.100"/></svg>
<div class="b" style="left:122px;top:671.5px;width:9.5px;height:81.5px;background:linear-gradient(180deg,#dfe8f3,#c5d5e8 40%)"></div>
<span class="t" style="left:0;top:0;font-size:11px;color:#2a2a2a;transform-origin:0 0;transform:translate(121.3px,750px) rotate(-90deg);letter-spacing:-0.25px">Terminal</span>
<span class="t" style="left:137.7px;top:662.6px;font-size:12px;color:#333;letter-spacing:-0.48px;">Symbol</span>
<span class="t" style="left:233.3px;top:662.6px;font-size:12px;color:#333;letter-spacing:-0.24px;">Condition</span>
<span class="t" style="left:394.4px;top:662.6px;font-size:12px;color:#333;letter-spacing:-0.55px;">Counter</span>
<span class="t" style="left:505px;top:662.6px;font-size:12px;color:#333;letter-spacing:-0.24px;">Limit</span>
<span class="t" style="left:584.5px;top:662.6px;font-size:12px;color:#333;letter-spacing:-0.27px;">Timeout</span>
<span class="t" style="left:740px;top:662.6px;font-size:12px;color:#333;letter-spacing:-0.35px;">Expiration</span>
<span class="t" style="left:800.4px;top:662.6px;font-size:12px;color:#333;letter-spacing:-1.07px;">Event</span>
<div class="vl" style="left:228px;top:659px;height:19px;background:#e6e6e6"></div>
<div class="vl" style="left:342px;top:659px;height:19px;background:#e6e6e6"></div>
<div class="vl" style="left:438.2px;top:659px;height:19px;background:#e6e6e6"></div>
<div class="vl" style="left:534.2px;top:659px;height:19px;background:#e6e6e6"></div>
<div class="vl" style="left:629.8px;top:659px;height:19px;background:#e6e6e6"></div>
<div class="vl" style="left:794.8px;top:659px;height:19px;background:#e6e6e6"></div>
<div class="vl" style="left:1574px;top:659px;height:19px;background:#e6e6e6"></div>
<div class="b" style="left:393.5px;top:732px;width:47.5px;height:19px;background:#fff;border:1px solid #555;border-top:none"></div>
<span class="t" style="left:145.2px;top:736.8px;font-size:11.8px;color:#6f6f6f;letter-spacing:-0.77px;">Trade</span>
<span class="t" style="left:193px;top:736.8px;font-size:11.8px;color:#6f6f6f;letter-spacing:-0.68px;">Exposure</span>
<span class="t" style="left:257.7px;top:736.8px;font-size:11.8px;color:#6f6f6f;letter-spacing:-0.23px;">Account History</span>
<span class="t" style="left:356.5px;top:736.8px;font-size:11.8px;color:#6f6f6f;letter-spacing:-0.67px;">News</span>
<span class="t" style="left:403px;top:736.8px;font-size:11.8px;color:#222;letter-spacing:-0.23px;">Alerts</span>
<span class="t" style="left:451.4px;top:736.8px;font-size:11.8px;color:#6f6f6f;letter-spacing:-0.01px;">Mailbox</span>
<span class="t" style="left:518.9px;top:736.8px;font-size:11.8px;color:#6f6f6f;letter-spacing:-0.23px;">Market</span>
<span class="t" style="left:572.9px;top:736.8px;font-size:11.8px;color:#6f6f6f;letter-spacing:-0.21px;">Articles</span>
<span class="t" style="left:629px;top:736.8px;font-size:11.8px;color:#6f6f6f;letter-spacing:-0.66px;">Code Base</span>
<span class="t" style="left:701.5px;top:736.8px;font-size:11.8px;color:#6f6f6f;letter-spacing:-0.6px;">Experts</span>
<span class="t" style="left:757px;top:736.8px;font-size:11.8px;color:#6f6f6f;letter-spacing:-0.57px;">Journal</span>
<span class="t" style="left:493.3px;top:741px;font-size:9px;font-weight:bold;font-style:italic;color:#e02020">7</span>
<div class="vl" style="left:183px;top:736px;height:14px;background:#8a8a8a"></div>
<div class="vl" style="left:248px;top:736px;height:14px;background:#8a8a8a"></div>
<div class="vl" style="left:346.8px;top:736px;height:14px;background:#8a8a8a"></div>
<div class="vl" style="left:508.7px;top:736px;height:14px;background:#8a8a8a"></div>
<div class="vl" style="left:563.9px;top:736px;height:14px;background:#8a8a8a"></div>
<div class="vl" style="left:619.4px;top:736px;height:14px;background:#8a8a8a"></div>
<div class="vl" style="left:691.7px;top:736px;height:14px;background:#8a8a8a"></div>
<div class="vl" style="left:747.6px;top:736px;height:14px;background:#8a8a8a"></div>
<div class="vl" style="left:802.3px;top:736px;height:14px;background:#8a8a8a"></div>
<!-- ===== status bar ===== -->
<div class="hl" style="left:122px;top:755px;width:1460px;background:#e6e6e6"></div><div class="hl" style="left:122px;top:756px;width:1460px;background:#d9d9d9"></div>
<div class="b" style="left:122px;top:757px;width:1460px;height:24px;background:#f0f0f0"></div><div class="b" style="left:122px;top:777px;width:1460px;height:4px;background:linear-gradient(180deg,#f4f4f4,#fdfdfd 40%)"></div>
<span class="t" style="left:123.5px;top:765.2px;font-size:12px;color:#222;letter-spacing:-0.53px;">or Help, press F1</span>
<span class="t" style="left:920px;top:765.2px;font-size:12px;color:#222;letter-spacing:-0.31px;">Default</span>
<div class="vl" style="left:914.8px;top:761px;height:15px;background:#c6c6c6"></div>
<div class="vl" style="left:1128px;top:761px;height:15px;background:#c6c6c6"></div>
<div class="vl" style="left:1196.5px;top:761px;height:15px;background:#c6c6c6"></div>
<div class="vl" style="left:1264.5px;top:761px;height:15px;background:#c6c6c6"></div>
<div class="vl" style="left:1328.8px;top:761px;height:15px;background:#c6c6c6"></div>
<div class="vl" style="left:1395px;top:761px;height:15px;background:#c6c6c6"></div>
<div class="vl" style="left:1459.3px;top:761px;height:15px;background:#c6c6c6"></div>
<div class="b" style="left:1463.5px;top:763px;width:1.5px;height:8.5px;background:#5a8a1a"></div><div class="b" style="left:1463.5px;top:771.5px;width:1.5px;height:3px;background:#1d2f6f"></div><div class="b" style="left:1466.12px;top:763px;width:1.5px;height:7.55px;background:#5a8a1a"></div><div class="b" style="left:1466.12px;top:770.55px;width:1.5px;height:3.95px;background:#1d2f6f"></div><div class="b" style="left:1468.74px;top:763px;width:1.5px;height:6.6px;background:#5a8a1a"></div><div class="b" style="left:1468.74px;top:769.6px;width:1.5px;height:4.9px;background:#1d2f6f"></div><div class="b" style="left:1471.36px;top:763px;width:1.5px;height:5.65px;background:#5a8a1a"></div><div class="b" style="left:1471.36px;top:768.65px;width:1.5px;height:5.85px;background:#1d2f6f"></div><div class="b" style="left:1473.98px;top:763px;width:1.5px;height:4.7px;background:#5a8a1a"></div><div class="b" style="left:1473.98px;top:767.7px;width:1.5px;height:6.8px;background:#1d2f6f"></div><div class="b" style="left:1476.6px;top:763px;width:1.5px;height:3.75px;background:#5a8a1a"></div><div class="b" style="left:1476.6px;top:766.75px;width:1.5px;height:7.75px;background:#1d2f6f"></div><div class="b" style="left:1479.22px;top:763px;width:1.5px;height:2.8px;background:#5a8a1a"></div><div class="b" style="left:1479.22px;top:765.8px;width:1.5px;height:8.7px;background:#1d2f6f"></div><div class="b" style="left:1481.84px;top:763px;width:1.5px;height:1.85px;background:#5a8a1a"></div><div class="b" style="left:1481.84px;top:764.85px;width:1.5px;height:9.65px;background:#1d2f6f"></div><div class="b" style="left:1484.46px;top:763px;width:1.5px;height:0.9px;background:#5a8a1a"></div><div class="b" style="left:1484.46px;top:763.9px;width:1.5px;height:10.6px;background:#1d2f6f"></div>
<span class="t" style="left:1491px;top:765.2px;font-size:11.8px;color:#222;letter-spacing:-0.28px;">16012/56 kb</span><!-- ===== Order dialog ===== -->
<div class="b" style="left:314.5px;top:98.5px;width:669.5px;height:356.5px;background:#f0f0f0;border-radius:7px;overflow:hidden;box-shadow:0 0 0 0.6px rgba(120,120,120,.55)">
<div class="b" style="left:0;top:0;width:670px;height:28.3px;background:linear-gradient(90deg,#f1f3f9 0%,#eef1fa 55%,#eef0fb 100%)"></div>
</div>
<span class="t" style="left:322px;top:107.5px;font-size:11.6px;color:#3c3c3c;letter-spacing:-0.09px;">Order</span>
<div class="hl" style="left:867.3px;top:112px;width:9.3px;background:#222;height:1.1px"></div>
<div class="b" style="left:912px;top:108.7px;width:8.6px;height:8.4px;border:1px solid #c6c6c6;border-radius:1.5px"></div>
<svg class="abs" style="left:955.3px;top:106.9px" width="12" height="12" viewBox="0 0 12 12"><path d="M1.300 1.300l9.200 9.200M10.500 1.300l-9.200 9.200" stroke="#222" stroke-width="1.100"/></svg>
<svg class="abs" style="left:320px;top:138px" width="270" height="310" viewBox="320 138 270 310" font-family="Liberation Sans, sans-serif">
<rect x="322.500" y="141.200" width="263.700" height="303.300" fill="#fff"/>
<path d="M322.300 444.600V141H586.300" stroke="#858585" stroke-width="1.100" fill="none"/>
<path d="M322.300 445H586.600V141" stroke="#fdfdfd" stroke-width="1" fill="none"/>
<path d="M350.15 143V443M374.55 143V443M398.95 143V443M423.35 143V443M447.75 143V443M472.15 143V443M496.55 143V443M520.95 143V443M325 150.3H545.500M325 174.72H545.500M325 199.14H545.500M325 223.56H545.500M325 247.98H545.500M325 272.4H545.500M325 296.82H545.500M325 321.24H545.500M325 345.66H545.500M325 370.08H545.500M325 394.5H545.500M325 418.92H545.500M325 443.34H545.500" stroke="#c9c9c9" stroke-width="1" stroke-dasharray="2.300 2.280" fill="none"/>
<path d="M324.500 443.500V142.600H545.900V443.400H324.500" stroke="#5f5f5f" stroke-width="1" fill="none"/>
<text x="326.200" y="153" font-size="8.600" fill="#333" textLength="35" lengthAdjust="spacingAndGlyphs">EURUSD</text>
<text x="551.300" y="155.4" font-size="9.500" fill="#333" textLength="28.800" lengthAdjust="spacingAndGlyphs">1.0845</text>
<text x="551.300" y="179.7" font-size="9.500" fill="#333" textLength="28.800" lengthAdjust="spacingAndGlyphs">1.0843</text>
<text x="551.300" y="204" font-size="9.500" fill="#333" textLength="28.800" lengthAdjust="spacingAndGlyphs">1.0841</text>
<text x="551.300" y="228.4" font-size="9.500" fill="#333" textLength="28.800" lengthAdjust="spacingAndGlyphs">1.0839</text>
<text x="551.300" y="252.8" font-size="9.500" fill="#333" textLength="28.800" lengthAdjust="spacingAndGlyphs">1.0837</text>
<text x="551.300" y="277.2" font-size="9.500" fill="#333" textLength="28.800" lengthAdjust="spacingAndGlyphs">1.0835</text>
<text x="551.300" y="301.6" font-size="9.500" fill="#333" textLength="28.800" lengthAdjust="spacingAndGlyphs">1.0833</text>
<text x="551.300" y="326" font-size="9.500" fill="#333" textLength="28.800" lengthAdjust="spacingAndGlyphs">1.0831</text>
<text x="551.300" y="350.4" font-size="9.500" fill="#333" textLength="28.800" lengthAdjust="spacingAndGlyphs">1.0828</text>
<text x="551.300" y="374.8" font-size="9.500" fill="#333" textLength="28.800" lengthAdjust="spacingAndGlyphs">1.0826</text>
<text x="551.300" y="399.2" font-size="9.500" fill="#333" textLength="28.800" lengthAdjust="spacingAndGlyphs">1.0824</text>
<text x="551.300" y="423.5" font-size="9.500" fill="#333" textLength="28.800" lengthAdjust="spacingAndGlyphs">1.0822</text>
<text x="551.300" y="445.7" font-size="9.500" fill="#333" textLength="28.800" lengthAdjust="spacingAndGlyphs">1.0820</text>
<path d="M326.2 362.5V374M328.7 362.5V374M331.2 362.5V374M332.6 351V363M335 351V362.5M337.5 351V362.5M340 351V362.5M342.4 340V357M344.2 351V362.5M346.6 351V368M348.8 362V374.5M351.2 351.5V362.5M353.6 351.5V362.5M356 351.5V363M358.2 362.5V374M360 362.5V374M361.6 362.5V374" stroke="#f47a7a" stroke-width="1.100" fill="none"/>
<path d="M326.2 397.5V409M328.7 397.5V409M331.2 397.5V409M332.6 386V398M335 386V397.5M337.5 386V397.5M340 386V397.5M342.4 375V392M344.2 386V397.5M346.6 386V403M348.8 397V409.5M351.2 386.5V397.5M353.6 386.5V397.5M356 386.5V398M358.2 397.5V409M360 397.5V409M361.6 397.5V409" stroke="#6a85f2" stroke-width="1.100" fill="none"/>
<path d="M362.700 375V178.300H546" stroke="#f28a8a" stroke-width="1" fill="none"/>
<path d="M363 409V375M363 322.500V276M362.800 235.500H546" stroke="#6f8cf0" stroke-width="1" fill="none"/>
<rect x="546.800" y="174.200" width="37.600" height="10.300" fill="#f9504f"/>
<text x="551.300" y="182.700" font-size="9.500" fill="#fff" textLength="28.800" lengthAdjust="spacingAndGlyphs">1.0843</text>
<rect x="546.800" y="231.900" width="37.600" height="10.300" fill="#0b51f2"/>
<text x="551.300" y="240.400" font-size="9.500" fill="#fff" textLength="28.800" lengthAdjust="spacingAndGlyphs">1.0838</text>
</svg>
<span class="t" style="left:639.2px;top:144.05px;font-size:10.3px;color:#222;letter-spacing:-0.4px;">Symbol:</span>
<div class="inp" style="left:681px;top:140px;width:286px;height:17.5px;border-color:#dedede;background:#fdfdfd"></div>
<span class="t" style="left:684.3px;top:144.05px;font-size:10.3px;color:#222;letter-spacing:-0.61px;">EURUSD, Euro vs US Dollar</span>
<svg class="abs" style="left:955.3px;top:146.3px" width="9" height="6" viewBox="0 0 9 6"><path d="M1 1l3.500 3.500L8 1" stroke="#7a7a7a" stroke-width="1.150" fill="none"/></svg>
<span class="t" style="left:638.2px;top:168.35px;font-size:10.3px;color:#222;letter-spacing:-0.24px;">Volume:</span>
<div class="inp" style="left:681px;top:164.3px;width:93px;height:17.5px;border-color:#8f8f8f;border-radius:2px"></div>
<span class="t" style="left:685.3px;top:168.35px;font-size:10.3px;color:#222;letter-spacing:-0.22px;">1.00</span>
<svg class="abs" style="left:762.5px;top:170.6px" width="9" height="6" viewBox="0 0 9 6"><path d="M1 1l3.500 3.500L8 1" stroke="#7a7a7a" stroke-width="1.150" fill="none"/></svg>
<span class="t" style="left:629px;top:192.65px;font-size:10.3px;color:#222;letter-spacing:-0.41px;">Stop Loss:</span>
<div class="inp" style="left:681px;top:188.7px;width:93px;height:17.3px"></div>
<div class="b" style="left:758.2px;top:188.4px;width:16.2px;height:18px;background:#e3e3e3;border:1px solid #cfcfcf"></div><svg class="abs" style="left:762.8px;top:191.5px" width="7" height="12" viewBox="0 0 7 12"><path d="M3.500 0.800L6.300 4H0.700zM3.500 11.200L6.300 8H0.700z" fill="#222"/></svg>
<span class="t" style="left:725px;top:192.65px;font-size:10.3px;color:#222;letter-spacing:-0.38px;">0.0000</span>
<span class="t" style="left:816.3px;top:192.65px;font-size:10.3px;color:#222;letter-spacing:-0.04px;">Take Profit:</span>
<div class="inp" style="left:875px;top:188.7px;width:92.5px;height:17.3px"></div>
<div class="b" style="left:951.7px;top:188.4px;width:16.2px;height:18px;background:#e3e3e3;border:1px solid #cfcfcf"></div><svg class="abs" style="left:956.3px;top:191.5px" width="7" height="12" viewBox="0 0 7 12"><path d="M3.500 0.800L6.300 4H0.700zM3.500 11.200L6.300 8H0.700z" fill="#222"/></svg>
<span class="t" style="left:918.5px;top:192.65px;font-size:10.3px;color:#222;letter-spacing:-0.38px;">0.0000</span>
<span class="t" style="left:629px;top:217.05px;font-size:10.3px;color:#222;letter-spacing:-0.36px;">Comment:</span>
<div class="inp" style="left:681px;top:213.5px;width:286px;height:17px"></div>
<span class="t" style="left:649.5px;top:241.35px;font-size:10.3px;color:#222;letter-spacing:-0.17px;">Type:</span>
<div class="inp" style="left:681px;top:237.9px;width:286px;height:17px;border-color:#dedede;background:#fdfdfd"></div>
<span class="t" style="left:684.3px;top:241.35px;font-size:10.3px;color:#222;letter-spacing:-0.37px;">Instant Execution</span>
<svg class="abs" style="left:955.3px;top:243.8px" width="9" height="6" viewBox="0 0 9 6"><path d="M1 1l3.500 3.500L8 1" stroke="#7a7a7a" stroke-width="1.150" fill="none"/></svg>
<div class="b" style="left:595.2px;top:271px;width:379.5px;height:175px;border:1px solid #dcdcdc;border-radius:2px"></div>
<div class="b" style="left:600px;top:266px;width:78px;height:10px;background:#f0f0f0"></div>
<span class="t" style="left:602px;top:265.75px;font-size:10.3px;color:#222;letter-spacing:-0.35px;">Instant Execution</span>
<span class="t" style="left:701.5px;top:296.4px;font-size:23.4px;color:#111;letter-spacing:0.36px;">1.0838 / 1.0843</span>
<div class="b" style="left:610.5px;top:335.3px;width:162.5px;height:16.7px;background:#fd7f7f;border-radius:2px;box-shadow:0 0 0 1px #e8ecec,0 1.2px 0 1px #d9dddd"></div>
<span class="t" style="left:684px;top:340.05px;font-size:10.3px;color:#40262e;letter-spacing:-0.29px;">Sell</span>
<div class="b" style="left:797.3px;top:335.3px;width:162.3px;height:16.7px;background:#9fbdfd;border-radius:2px;box-shadow:0 0 0 1px #e8ecec,0 1.2px 0 1px #d9dddd"></div>
<span class="t" style="left:870.3px;top:340.05px;font-size:10.3px;color:#263050;letter-spacing:-0.97px;">Buy</span>
<div class="b" style="left:610.5px;top:362.4px;width:349.5px;height:17.6px;background:#f9f9f9;border-radius:2px"></div>
<div class="b" style="left:608.7px;top:395.8px;width:12px;height:12px;background:#fdfdfd;border:1px solid #8f8f8f;border-radius:2.5px"></div>
<span class="t" style="left:623.6px;top:397.85px;font-size:10.3px;color:#222;letter-spacing:-0.24px;">Enable maximum deviation from quoted price</span>
<span class="t" style="left:700.8px;top:421.85px;font-size:10.3px;color:#222;letter-spacing:-0.27px;">Maximum deviation:</span>
<div class="inp" style="left:797.3px;top:417px;width:53.5px;height:17.5px;border-color:#dcdcdc;background:#f9f9f9"></div>
<div class="b" style="left:798.3px;top:418px;width:34px;height:15.5px;background:#f1f1f1"></div>
<span class="t" style="left:802px;top:421.85px;font-size:10.3px;color:#a2a2a2;letter-spacing:-1.13px;">0</span>
<svg class="abs" style="left:838.3px;top:423.7px" width="9" height="6" viewBox="0 0 9 6"><path d="M1 1l3.500 3.500L8 1" stroke="#b8b8b8" stroke-width="1.150" fill="none"/></svg>
<span class="t" style="left:854.6px;top:421.85px;font-size:10.3px;color:#222;letter-spacing:-0.4px;">pips</span></div></div>
<div id="frame"></div>
</body>
</html>
